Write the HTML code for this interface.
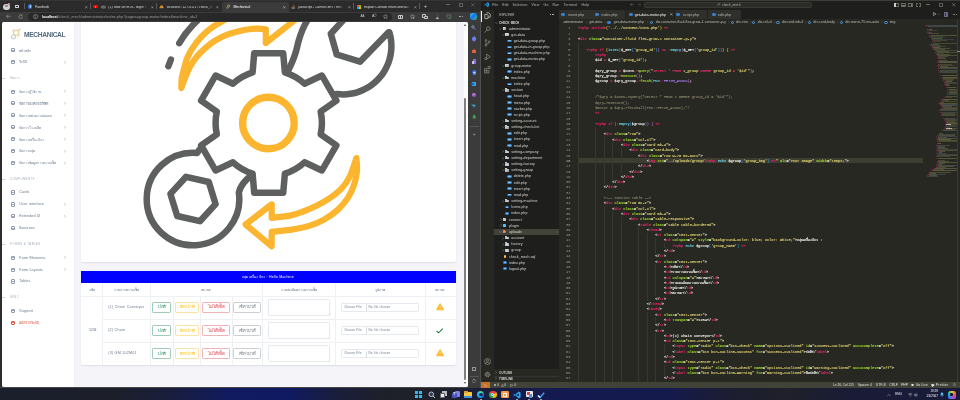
<!DOCTYPE html>
<html lang="th"><head><meta charset="utf-8"><title>Mechanical</title>
<style>
*{box-sizing:border-box}
html,body{margin:0;padding:0}
body{width:960px;height:400px;overflow:hidden;position:relative;background:#1d2028;font-family:"Liberation Sans",sans-serif;-webkit-font-smoothing:antialiased}
.a{position:absolute}
.t{position:absolute;white-space:nowrap;line-height:1}
svg{position:absolute;overflow:visible}
/* browser */
#edge{left:0;top:0;width:480.5px;height:387.6px;background:#3b3b3b;overflow:hidden}
#tabs{left:0;top:0;width:480.5px;height:11.5px;background:#2b2b2b}
.tt{font-size:3.5px;color:#d6d6d6;top:4.6px}
.tx{font-size:4px;color:#c8c8c8;top:4.2px}
.sep{width:.4px;height:6px;top:3.2px;background:#5a5a5a}
#pill{left:28px;top:12.6px;width:364px;height:8.5px;border-radius:4.3px;background:#282828}
/* page */
#page{left:1.5px;top:22px;width:466.5px;height:364.6px;background:#f5f5f9;border-radius:2.2px 2.2px 2.5px 2.5px;overflow:hidden}
#side{left:0;top:0;width:72.5px;height:364.6px;background:#fff;box-shadow:0 0 1.5px rgba(67,89,113,.12)}
.mi{font-size:3.65px;color:#697a8d;left:17.8px}
.mh{font-size:2.85px;color:#a1acb8;left:8.7px;letter-spacing:.05px}
.card{background:#fff;border-radius:2px;box-shadow:0 .5px 1.5px rgba(67,89,113,.14)}
.th{font-size:3.3px;color:#566a7f;text-align:center}
.td{font-size:3.65px;color:#697a8d}
.btn{position:absolute;height:11.3px;border:.4px solid;border-radius:1.2px;font-size:3.5px;line-height:10px;text-align:center;background:#fff}
.ta{position:absolute;width:62px;height:17.2px;border:.4px solid #e6e9ed;border-radius:1.3px;background:#fff}
.fi{position:absolute;width:78.5px;height:8.8px;border:.4px solid #e6e9ed;border-radius:1.3px;background:#fff;font-size:2.9px;color:#697a8d;line-height:8px}
/* vscode */
#vsc{left:481px;top:0;width:479px;height:387.7px;background:#272822;overflow:hidden;font-family:"Liberation Sans",sans-serif}
.code{font-family:"Liberation Mono","Noto Sans CJK SC",monospace;font-size:3.58px;line-height:5.3px;white-space:pre;color:#f8f8f2;-webkit-text-stroke:.1px;position:absolute;left:97px;height:5.3px}
.ln{font-family:"Liberation Mono",monospace;font-size:3.58px;line-height:5.3px;color:#90908a;position:absolute;left:77.4px;width:12px;text-align:right;height:5.3px}
.p{color:#f92672}.g{color:#a6e22e}.y{color:#e6db74}.b{color:#66d9ef}.c{color:#88846f}.v{color:#ae81ff}.o{color:#fd971f}.k1{color:#e6c820}.k2{color:#c86cc6}.k3{color:#2f95e8}.q{color:#c23264}
.tr{font-size:3.3px;color:#dcdcd6;height:6.16px;line-height:6.16px}
.sb{font-size:3.1px;color:#e8e8e2;top:383.6px}
</style></head>
<body>
<div id="root" class="a" style="left:0;top:0;width:960px;height:400px;will-change:transform">
<div id="edge" class="a"><div id="tabs" class="a"><div class="a" style="left:0;top:0;width:480.5px;height:1px;background:#353535"></div><div class="a" style="left:3.4px;top:3.5px;width:6.2px;height:6.2px;border-radius:50%;background:#d9d2d2"></div><div class="a" style="left:5.2px;top:4.6px;width:2.6px;height:2.6px;border-radius:50%;background:#8d8686"></div><div class="a" style="left:8px;top:3.3px;width:1.8px;height:1.8px;border-radius:50%;background:#e8a0a0"></div><div class="a" style="left:14.8px;top:4.7px;width:4.4px;height:3.8px;border:.5px solid #d8d8d8;border-top-width:1px;border-radius:.7px"></div><div class="a sep" style="left:24.3px"></div><div class="a" style="left:27.6px;top:4.3px;width:4.8px;height:4.8px;border-radius:50%;background:#1b74e4"></div><div class="t" style="left:29.40px;top:5.02px;font-size:4.4px;color:#fff;font-weight:bold;">f</div><div class="t" style="left:35.00px;top:6.02px;font-size:3.5px;color:#d6d6d6;letter-spacing:-0.172px;">Facebook</div><svg style="left:84.7px;top:5.6px" width="2.6" height="2.6" viewBox="0 0 26 26"><path d="M3 3l20 20M23 3L3 23" stroke="#cfcfcf" stroke-width="4.2"/></svg><div class="a sep" style="left:90.4px"></div><div class="a" style="left:93.2px;top:5px;width:4.8px;height:3.4px;border-radius:1px;background:#f00"></div><div class="a" style="left:95px;top:5.9px;width:0;height:0;border-left:1.5px solid #fff;border-top:.85px solid transparent;border-bottom:.85px solid transparent"></div><svg style="left:100.8px;top:4.6px" width="4.6" height="4.2" viewBox="0 0 46 42"><path d="M4 15h8l10-9v30l-10-9H4z" fill="none" stroke="#ddd" stroke-width="4"/><path d="M30 12q8 9 0 18M37 6q13 15 0 30" fill="none" stroke="#ddd" stroke-width="4"/></svg><div class="t" style="left:108.30px;top:6.02px;font-size:3.5px;color:#d6d6d6;letter-spacing:-0.001px;-webkit-mask-image:linear-gradient(90deg,#000 85%,transparent);">(1) ค้นหาเท่าที่ใจ - Night Ti</div><svg style="left:150.8px;top:5.6px" width="2.6" height="2.6" viewBox="0 0 26 26"><path d="M3 3l20 20M23 3L3 23" stroke="#cfcfcf" stroke-width="4.2"/></svg><div class="a sep" style="left:156.2px"></div><svg style="left:158.8px;top:4.3px" width="5" height="4.6" viewBox="0 0 50 46"><path d="M4 40L22 8l8 14 8-8 8 26z" fill="#f29111"/><path d="M4 40h42" stroke="#6c78af" stroke-width="6"/></svg><div class="t" style="left:166.70px;top:6.02px;font-size:3.5px;color:#d6d6d6;letter-spacing:-0.079px;-webkit-mask-image:linear-gradient(90deg,#000 88%,transparent);">localhost / 127.0.0.1 / check_m</div><svg style="left:216.3px;top:5.6px" width="2.6" height="2.6" viewBox="0 0 26 26"><path d="M3 3l20 20M23 3L3 23" stroke="#cfcfcf" stroke-width="4.2"/></svg><div class="a" style="left:221.6px;top:2.2px;width:67px;height:9.4px;border-radius:2px 2px 0 0;background:#3b3b3b"></div><svg style="left:225.6px;top:4.2px" width="4.6" height="5" viewBox="0 0 46 50"><circle cx="26" cy="20" r="11" fill="none" stroke="#e0b050" stroke-width="7"/><circle cx="14" cy="36" r="8" fill="none" stroke="#9a9a9a" stroke-width="6"/></svg><div class="t" style="left:233.50px;top:6.02px;font-size:3.5px;color:#d6d6d6;letter-spacing:-0.112px;color:#fff">Mechanical</div><svg style="left:282.8px;top:5.6px" width="2.6" height="2.6" viewBox="0 0 26 26"><path d="M3 3l20 20M23 3L3 23" stroke="#f0f0f0" stroke-width="4.2"/></svg><svg style="left:290.6px;top:4.2px" width="4.6" height="5" viewBox="0 0 46 50"><path d="M8 30v14h28V30" fill="none" stroke="#bcbbbb" stroke-width="5"/><path d="M14 36h16M15 27l16 4M19 17l14 8M27 7l10 13" stroke="#f48024" stroke-width="5"/></svg><div class="t" style="left:298.30px;top:6.02px;font-size:3.5px;color:#d6d6d6;letter-spacing:-0.097px;-webkit-mask-image:linear-gradient(90deg,#000 90%,transparent);">javascript - Cannot GET / error</div><svg style="left:348.40000000000003px;top:5.6px" width="2.6" height="2.6" viewBox="0 0 26 26"><path d="M3 3l20 20M23 3L3 23" stroke="#cfcfcf" stroke-width="4.2"/></svg><div class="a sep" style="left:353.3px"></div><div class="a" style="left:356.5px;top:4.5px;width:2.1px;height:2.1px;background:#f25022"></div><div class="a" style="left:358.9px;top:4.5px;width:2.1px;height:2.1px;background:#7fba00"></div><div class="a" style="left:356.5px;top:6.9px;width:2.1px;height:2.1px;background:#00a4ef"></div><div class="a" style="left:358.9px;top:6.9px;width:2.1px;height:2.1px;background:#ffb900"></div><div class="t" style="left:363.90px;top:6.02px;font-size:3.5px;color:#d6d6d6;letter-spacing:-0.135px;-webkit-mask-image:linear-gradient(90deg,#000 90%,transparent);">Explain Console errors and warn</div><svg style="left:413.8px;top:5.6px" width="2.6" height="2.6" viewBox="0 0 26 26"><path d="M3 3l20 20M23 3L3 23" stroke="#cfcfcf" stroke-width="4.2"/></svg><div class="a sep" style="left:419.4px"></div><div class="t" style="left:424.00px;top:4.02px;font-size:5px;color:#ddd;">+</div><div class="a" style="left:446px;top:4px;width:4px;height:1px;background:#6a6a6a"></div><div class="a" style="left:459px;top:3px;width:4px;height:4px;border:1px solid #5e5e5e"></div><svg style="left:471.2px;top:2.8px" width="3.6" height="3.6" viewBox="0 0 36 36"><path d="M2 2l32 32M34 2L2 34" stroke="#aaa" stroke-width="3.4"/></svg></div><svg style="left:5.6px;top:14.3px" width="5" height="4.6" viewBox="0 0 50 46"><path d="M46 23H6M22 5L5 23l17 18" fill="none" stroke="#d0d0d0" stroke-width="4"/></svg><svg style="left:18px;top:14px" width="5.2" height="5.2" viewBox="0 0 52 52"><path d="M44 26a18 18 0 1 1-6-13.5" fill="none" stroke="#d0d0d0" stroke-width="4"/><path d="M40 3v12H28" fill="none" stroke="#d0d0d0" stroke-width="4"/></svg><div id="pill" class="a"></div><svg style="left:32.5px;top:14.2px" width="5.2" height="5.2" viewBox="0 0 52 52"><circle cx="26" cy="26" r="21" fill="none" stroke="#cfcfcf" stroke-width="4.2"/><path d="M26 23v14M26 15v4" stroke="#cfcfcf" stroke-width="4.6"/></svg><div class="t" style="left:42.00px;top:16.02px;font-size:3.5px;color:#ffffff;font-weight:bold;letter-spacing:0.025px;">localhost</div><div class="t" style="left:58.00px;top:16.02px;font-size:3.5px;color:#a2a2a2;letter-spacing:0.213px;">/check_mech/administrator/index.php?pages=group-motor/index&amp;machine_id=1</div><div class="t" style="left:360.60px;top:15.02px;font-size:3.4px;color:#cfcfcf;">A<span style="font-size:2.6px">A</span></div><div class="t" style="left:372.00px;top:15.02px;font-size:3.8px;color:#cfcfcf;">A<span style="font-size:2.6px;position:relative;top:-1px">›)</span></div><svg style="left:383.4px;top:14.1px" width="5" height="5" viewBox="0 0 50 50"><path d="M25 4l6.5 14 15 2-11 10.5 2.8 15L25 38l-13.3 7.5 2.8-15L3.500 20l15-2z" fill="none" stroke="#cfcfcf" stroke-width="3.8" stroke-linejoin="round"/></svg><div class="a" style="left:397.8px;top:14.6px;width:5.4px;height:4.2px;border:1px solid #c8c8c8;border-radius:.9px"></div><div class="a" style="left:400.25px;top:14.6px;width:.8px;height:4.2px;background:#c8c8c8"></div><svg style="left:409.5px;top:14.1px" width="5" height="5" viewBox="0 0 50 50"><path d="M25 4l6.5 14 15 2-11 10.5 2.8 15L25 38l-13.3 7.5 2.8-15L3.500 20l15-2z" fill="none" stroke="#cfcfcf" stroke-width="3.8" stroke-linejoin="round"/><path d="M36 32v14M29 39h14" stroke="#cfcfcf" stroke-width="3.8"/></svg><div class="a" style="left:422.4px;top:14.2px;width:3.6px;height:3.6px;border:1px solid #c8c8c8;border-radius:.9px"></div><div class="a" style="left:424px;top:15.6px;width:3.6px;height:3.6px;border:1px solid #c8c8c8;border-radius:.9px;background:#3b3b3b"></div><svg style="left:434.6px;top:14px" width="4.8" height="5.4" viewBox="0 0 48 54"><path d="M24 4v28M24 32c-10 4-14 12-14 18h28c0-6-4-14-14-18z" fill="#b5b5b5" stroke="#b5b5b5" stroke-width="2"/></svg><svg style="left:446.2px;top:14.3px" width="5.6" height="5" viewBox="0 0 56 50"><path d="M28 46C6 30 4 20 8 12c5-8 15-7 20 1 5-8 15-9 20-1 4 8 2 18-20 34z" fill="none" stroke="#bdbdbd" stroke-width="3.6"/><circle cx="42" cy="40" r="7" fill="#3fa34d"/></svg><div class="a" style="left:458.6px;top:16.4px;width:.8px;height:.8px;border-radius:50%;background:#e0e0e0"></div><div class="a" style="left:460.3px;top:16.4px;width:.8px;height:.8px;border-radius:50%;background:#e0e0e0"></div><div class="a" style="left:462.0px;top:16.4px;width:.8px;height:.8px;border-radius:50%;background:#e0e0e0"></div><div class="a" style="left:469.6px;top:13px;width:7.2px;height:7.2px;border-radius:2.4px;background:linear-gradient(135deg,#2ec4f0 10%,#1b6ff0 45%,#27c28a 95%)"></div><svg style="left:471.2px;top:25.2px" width="4.8" height="4.8" viewBox="0 0 48 48"><circle cx="19" cy="19" r="12" fill="#2d3e55" stroke="#8fd0f5" stroke-width="6"/><path d="M29 29l14 14" stroke="#c060d0" stroke-width="8" stroke-linecap="round"/></svg><div class="a" style="left:471.7px;top:37.2px;width:3.8px;height:3.8px;border-radius:.9px;background:linear-gradient(135deg,#5a8df5,#8a6cf0);transform:rotate(-35deg) skewX(-10deg)"></div><div class="a" style="left:471.5px;top:50px;width:4.6px;height:3.2px;border-radius:.7px;background:#e2623a"></div><div class="a" style="left:472.6px;top:48.8px;width:2.4px;height:1.6px;border-radius:.8px .8px 0 0;border:.5px solid #c4472a;border-bottom:none"></div><div class="a" style="left:473.2px;top:59.4px;width:2.6px;height:4.4px;border-radius:.8px;background:#8f6fe0"></div><div class="a" style="left:471.6px;top:60.8px;width:2.4px;height:3px;border-radius:.8px;background:#d8c8f0"></div><div class="a" style="left:471.5px;top:70.3px;width:4.6px;height:4.6px;border-radius:50%;background:conic-gradient(#3a6cf0,#7ab8ff,#2a4fd8,#3a6cf0)"></div><div class="a" style="left:472.9px;top:71.7px;width:1.8px;height:1.8px;border-radius:50%;background:#dde8ff"></div><div class="a" style="left:472.4px;top:81.6px;width:3.8px;height:4px;border-radius:.6px;background:#35a2f0"></div><div class="a" style="left:471.3px;top:82.6px;width:2.8px;height:2.8px;border-radius:.5px;background:#1466c0"></div><div class="a" style="left:471.6px;top:92.6px;width:4.4px;height:4.2px;border-radius:45% 55% 50% 50%;background:linear-gradient(160deg,#d58af0,#8a35c8)"></div><svg style="left:471.2px;top:103.6px" width="5.2" height="4.2" viewBox="0 0 52 42"><path d="M2 6l48 2-22 30-6-16z" fill="#35b5c8"/><path d="M22 22l28-14-22 30z" fill="#2a78c8"/></svg><svg style="left:471.6px;top:113.8px" width="4.4" height="5.6" viewBox="0 0 44 56"><path d="M22 2l18 26H30l12 16H2l12-16H4z" fill="#3aa856"/><rect x="19" y="44" width="6" height="10" fill="#6b4a2a"/></svg><div class="a" style="left:469.5px;top:125.6px;width:9px;height:.4px;background:#555"></div><div class="t" style="left:472.70px;top:133.02px;font-size:4.6px;color:#a8a8a8;">+</div><div class="a" style="left:471.6px;top:367.4px;width:4.8px;height:3.8px;border:.45px solid #9a9a9a;border-radius:.6px"></div><div class="a" style="left:471.9px;top:379.2px;width:4.2px;height:4.2px;border-radius:50%;border:.8px dotted #a0a0a0"></div><div class="a" style="left:469.5px;top:375.6px;width:9px;height:.35px;background:#555"></div><div class="a" style="left:0;top:22px;width:1.6px;height:366px;background:#2c2c2c"></div><div class="a" style="left:0;top:386.7px;width:469px;height:.9px;background:#444"></div><div class="a" style="left:480px;top:10px;width:.6px;height:378px;background:#505050"></div><div id="page" class="a"><div class="a card" style="left:79.6px;top:-10px;width:375px;height:250px"></div><div class="a card" style="left:79.6px;top:249.4px;width:375px;height:93.8px;overflow:hidden;border-radius:0 0 2px 2px"><div class="a" style="left:0;top:0;width:375px;height:11.9px;background:#0000fe"></div><div class="t" style="left:160.90px;top:4.62px;font-size:3.5px;color:#fff;letter-spacing:0.215px;">กลุ่มเครื่องจักร : Hello Machine</div><div class="a" style="left:21.400000000000006px;top:11.9px;width:.4px;height:82px;background:#eff0f3"></div><div class="a" style="left:69.30000000000001px;top:11.9px;width:.4px;height:82px;background:#eff0f3"></div><div class="a" style="left:181.29999999999998px;top:11.9px;width:.4px;height:82px;background:#eff0f3"></div><div class="a" style="left:254.1px;top:11.9px;width:.4px;height:82px;background:#eff0f3"></div><div class="a" style="left:343.9px;top:11.9px;width:.4px;height:82px;background:#eff0f3"></div><div class="a" style="left:92.4px;top:24.8px;width:.4px;height:70px;background:#eff0f3"></div><div class="a" style="left:118.9px;top:24.8px;width:.4px;height:70px;background:#eff0f3"></div><div class="a" style="left:150.5px;top:24.8px;width:.4px;height:70px;background:#eff0f3"></div><div class="a" style="left:0;top:24.7px;width:375px;height:.4px;background:#eff0f3"></div><div class="a" style="left:21.400000000000006px;top:47.400000000000034px;width:354px;height:.4px;background:#eff0f3"></div><div class="a" style="left:21.400000000000006px;top:70.40000000000003px;width:354px;height:.4px;background:#eff0f3"></div><div class="t" style="left:0.00px;top:17.62px;font-size:3.3px;color:#566a7f;width:21.400000000000006px;text-align:center;">รหัส</div><div class="t" style="left:21.40px;top:17.62px;font-size:3.3px;color:#566a7f;width:47.900000000000006px;text-align:center;">รายการตรวจเช็ค</div><div class="t" style="left:69.30px;top:17.62px;font-size:3.3px;color:#566a7f;width:111.99999999999997px;text-align:center;">สถานะ</div><div class="t" style="left:181.30px;top:17.62px;font-size:3.3px;color:#566a7f;width:72.80000000000001px;text-align:center;">รายละเอียดการตรวจเช็ค</div><div class="t" style="left:254.10px;top:17.62px;font-size:3.3px;color:#566a7f;width:89.80000000000001px;text-align:center;">รูปภาพ</div><div class="t" style="left:343.90px;top:17.62px;font-size:3.3px;color:#566a7f;width:31px;text-align:center;">สถานะ</div><div class="t" style="left:7.80px;top:57.62px;font-size:3.65px;color:#697a8d;letter-spacing:-0.127px;">1234</div><div class="t" style="left:27.10px;top:34.62px;font-size:3.65px;color:#697a8d;letter-spacing:0.246px;">(1) Chain Conveyor</div><div class="btn" style="left:71.30000000000001px;top:30.600000000000023px;width:19.0px;border-color:#9fccb6"></div><div class="t" style="left:71.30px;top:33.62px;font-size:4.06px;color:#198754;width:19.0px;text-align:center;">ปกติ</div><div class="btn" style="left:94.1px;top:30.600000000000023px;width:24.100000000000023px;border-color:#f9e3a6"></div><div class="t" style="left:94.10px;top:33.62px;font-size:4.33px;color:#ffc107;width:24.100000000000023px;text-align:center;">ผิดปกติ</div><div class="btn" style="left:121.20000000000002px;top:30.600000000000023px;width:27.899999999999977px;border-color:#efb4b9"></div><div class="t" style="left:121.20px;top:33.62px;font-size:4.38px;color:#dc3545;width:27.899999999999977px;text-align:center;">ไม่ได้เช็ค</div><div class="btn" style="left:152.3px;top:30.600000000000023px;width:27.599999999999994px;border-color:#cdd0d3"></div><div class="t" style="left:152.30px;top:33.62px;font-size:4.0px;color:#6c757d;width:27.599999999999994px;text-align:center;">เช็คไม่ได้</div><div class="ta" style="left:186.9px;top:27.30000000000001px"></div><svg style="left:246.50000000000003px;top:42.10000000000002px" width="2" height="2" viewBox="0 0 20 20"><path d="M18 4L4 18M18 12l-6 6" stroke="#8a8f98" stroke-width="2.2"/></svg><div class="fi" style="left:259.9px;top:31.5px"><span style="position:absolute;left:24.3px;top:.5px;width:.4px;height:7px;background:#d9dee3"></span></div><div class="t" style="left:263.10px;top:34.62px;font-size:2.95px;color:#697a8d;letter-spacing:0.174px;">Choose File</div><div class="t" style="left:287.40px;top:34.62px;font-size:2.95px;color:#697a8d;letter-spacing:0.241px;">No file chosen</div><svg style="left:354.6px;top:31.900000000000034px" width="8.2" height="7.4" viewBox="0 0 82 74"><path d="M41 6L77 68H5z" fill="#fdb528" stroke="#fdb528" stroke-width="8" stroke-linejoin="round"/><path d="M41 27v20M41 55v6" stroke="#fff" stroke-width="7"/></svg><div class="t" style="left:27.10px;top:57.62px;font-size:3.65px;color:#697a8d;letter-spacing:0.224px;">(2) Chain</div><div class="btn" style="left:71.30000000000001px;top:53.700000000000045px;width:19.0px;border-color:#9fccb6"></div><div class="t" style="left:71.30px;top:57.62px;font-size:4.06px;color:#198754;width:19.0px;text-align:center;">ปกติ</div><div class="btn" style="left:94.1px;top:53.700000000000045px;width:24.100000000000023px;border-color:#f9e3a6"></div><div class="t" style="left:94.10px;top:57.62px;font-size:4.33px;color:#ffc107;width:24.100000000000023px;text-align:center;">ผิดปกติ</div><div class="btn" style="left:121.20000000000002px;top:53.700000000000045px;width:27.899999999999977px;border-color:#efb4b9"></div><div class="t" style="left:121.20px;top:57.62px;font-size:4.38px;color:#dc3545;width:27.899999999999977px;text-align:center;">ไม่ได้เช็ค</div><div class="btn" style="left:152.3px;top:53.700000000000045px;width:27.599999999999994px;border-color:#cdd0d3"></div><div class="t" style="left:152.30px;top:57.62px;font-size:4.0px;color:#6c757d;width:27.599999999999994px;text-align:center;">เช็คไม่ได้</div><div class="ta" style="left:186.9px;top:50.400000000000034px"></div><svg style="left:246.50000000000003px;top:65.20000000000005px" width="2" height="2" viewBox="0 0 20 20"><path d="M18 4L4 18M18 12l-6 6" stroke="#8a8f98" stroke-width="2.2"/></svg><div class="fi" style="left:259.9px;top:54.60000000000002px"><span style="position:absolute;left:24.3px;top:.5px;width:.4px;height:7px;background:#d9dee3"></span></div><div class="t" style="left:263.10px;top:57.62px;font-size:2.95px;color:#697a8d;letter-spacing:0.174px;">Choose File</div><div class="t" style="left:287.40px;top:57.62px;font-size:2.95px;color:#697a8d;letter-spacing:0.241px;">No file chosen</div><svg style="left:355.1px;top:56.200000000000045px" width="7.4" height="5.6" viewBox="0 0 74 56"><path d="M6 30l20 18L68 7" fill="none" stroke="#1a7f45" stroke-width="11"/></svg><div class="t" style="left:27.10px;top:80.62px;font-size:3.65px;color:#697a8d;letter-spacing:0.238px;">(3) GM 102M01</div><div class="btn" style="left:71.30000000000001px;top:76.80000000000001px;width:19.0px;border-color:#9fccb6"></div><div class="t" style="left:71.30px;top:80.62px;font-size:4.06px;color:#198754;width:19.0px;text-align:center;">ปกติ</div><div class="btn" style="left:94.1px;top:76.80000000000001px;width:24.100000000000023px;border-color:#f9e3a6"></div><div class="t" style="left:94.10px;top:80.62px;font-size:4.33px;color:#ffc107;width:24.100000000000023px;text-align:center;">ผิดปกติ</div><div class="btn" style="left:121.20000000000002px;top:76.80000000000001px;width:27.899999999999977px;border-color:#efb4b9"></div><div class="t" style="left:121.20px;top:80.62px;font-size:4.38px;color:#dc3545;width:27.899999999999977px;text-align:center;">ไม่ได้เช็ค</div><div class="btn" style="left:152.3px;top:76.80000000000001px;width:27.599999999999994px;border-color:#cdd0d3"></div><div class="t" style="left:152.30px;top:80.62px;font-size:4.0px;color:#6c757d;width:27.599999999999994px;text-align:center;">เช็คไม่ได้</div><div class="ta" style="left:186.9px;top:73.5px"></div><svg style="left:246.50000000000003px;top:88.30000000000001px" width="2" height="2" viewBox="0 0 20 20"><path d="M18 4L4 18M18 12l-6 6" stroke="#8a8f98" stroke-width="2.2"/></svg><div class="fi" style="left:259.9px;top:77.69999999999999px"><span style="position:absolute;left:24.3px;top:.5px;width:.4px;height:7px;background:#d9dee3"></span></div><div class="t" style="left:263.10px;top:80.62px;font-size:2.95px;color:#697a8d;letter-spacing:0.174px;">Choose File</div><div class="t" style="left:287.40px;top:80.62px;font-size:2.95px;color:#697a8d;letter-spacing:0.241px;">No file chosen</div><svg style="left:354.6px;top:78.10000000000002px" width="8.2" height="7.4" viewBox="0 0 82 74"><path d="M41 6L77 68H5z" fill="#fdb528" stroke="#fdb528" stroke-width="8" stroke-linejoin="round"/><path d="M41 27v20M41 55v6" stroke="#fff" stroke-width="7"/></svg></div><svg style="left:-1.5px;top:-22px" width="960" height="400" viewBox="0 0 960 400" fill="none" stroke-linecap="round" stroke-linejoin="round"><g stroke="#5d605f" stroke-width="6.5"><path d="M252.6 72.4L254.2 53.2L283.2 53.2L284.9 72.4A53.1 53.1 0 0 1 304.5 83.7L321.9 75.5L336.4 100.7L320.7 111.7A53.1 53.1 0 0 1 320.7 134.3L336.4 145.3L321.9 170.5L304.5 162.3A53.1 53.1 0 0 1 284.9 173.6L283.2 192.8L254.2 192.8L252.6 173.6A53.1 53.1 0 0 1 233.0 162.3L215.6 170.5L201.1 145.3L216.8 134.3A53.1 53.1 0 0 1 216.8 111.7L201.1 100.7L215.6 75.5L233.0 83.7A53.1 53.1 0 0 1 252.6 72.4Z"/><path d="M287.3 72.2C288.1 70.6 290.6 65.9 292.0 62.5C293.4 59.1 294.7 55.6 295.8 52.0C296.9 48.4 297.5 44.7 298.6 41.0C299.7 37.3 300.9 33.5 302.4 30.0C303.9 26.5 305.7 23.0 307.5 20.0C309.3 17.0 312.1 13.3 313.0 12.0"/><path d="M348 15L330.8 33.7L336.7 54.5L360 61.7L388.6 32.2L389.4 32.3C389.7 33.4 390.6 36.7 390.9 39.0C391.2 41.2 391.4 43.5 391.4 45.8C391.4 48.1 391.3 50.4 390.9 52.7C390.6 54.9 390.1 57.2 389.5 59.4C388.9 61.6 388.1 63.8 387.1 65.9C386.2 67.9 385.1 70.0 383.9 71.9C382.7 73.8 381.3 75.7 379.8 77.4C378.3 79.2 376.7 80.8 375.0 82.3C373.3 83.8 371.4 85.2 369.5 86.5C367.6 87.7 365.6 88.9 363.5 89.8C361.4 90.8 359.3 91.6 357.1 92.3C354.9 93.0 352.7 93.5 350.4 93.8C348.1 94.2 345.8 94.4 343.5 94.4C341.3 94.4 337.8 94.1 336.7 94.0"/><path d="M252 174.8Q240.6 183.4 238.85 192.6A46.3 46.3 0 1 1 197 152.9L201.7 146.8"/><path d="M215.6 204.1L199.9 221.2L177.2 216.0L170.4 193.9L186.1 176.8L208.8 182.0Z"/><path d="M179.3 43.2Q186.5 30.5 198.5 19.5"/><path d="M170.9 59.6L168.4 66.1"/></g><circle cx="268.4" cy="123" r="25.8" stroke="#fbb52e" stroke-width="7.4"/><path d="M271.7 217.7L271.7 204.3L245.6 224.5L271.7 246.3L271.7 231.8L271.7 231.8C273.6 231.6 279.3 231.0 283.0 230.6C286.7 230.2 289.5 230.0 294.0 229.2C298.5 228.4 305.0 227.2 310.0 225.6C315.0 224.0 319.3 222.3 324.0 219.6C328.7 216.9 334.0 213.3 338.0 209.6C342.0 205.9 345.3 201.7 348.0 197.6C350.7 193.5 352.5 189.4 354.0 185.0C355.5 180.6 356.6 175.5 357.0 171.0C357.4 166.5 356.5 160.2 356.4 158.0L356.4 158.0C355.3 161.0 352.4 171.0 350.0 176.0C347.6 181.0 345.3 184.3 342.0 188.0C338.7 191.7 334.3 195.0 330.0 198.0C325.7 201.0 320.7 203.7 316.0 206.0C311.3 208.3 306.3 210.4 302.0 212.0C297.7 213.6 295.1 214.6 290.0 215.6C284.9 216.6 274.8 217.5 271.7 217.9" stroke="#fbb52e" stroke-width="6.2"/><path d="M265.8 29.3L258.0 28.6C256.7 28.7 253.0 28.8 250.0 29.2C247.0 29.6 243.7 30.0 240.0 30.9C236.3 31.8 231.9 32.8 227.8 34.4C223.7 36.0 219.3 38.1 215.5 40.4C211.7 42.7 208.2 45.5 205.0 48.3C201.8 51.1 198.9 54.0 196.3 57.2C193.7 60.4 191.5 64.0 189.6 67.5C187.7 71.0 186.2 75.1 184.8 78.5C183.4 81.9 181.9 86.4 181.3 88.0L181.3 88.0C181.4 86.5 181.3 81.7 181.6 79.0C181.9 76.3 182.2 75.6 183.2 72.0C184.2 68.4 185.3 62.2 187.4 57.4C189.5 52.6 192.7 47.6 196.0 43.2C199.3 38.8 203.4 34.4 207.5 30.9C211.6 27.4 216.7 24.5 220.8 22.0C224.9 19.5 230.1 17.0 232.0 16.0M265.8 29.3L265.8 43L291.6 22.6L296 19" stroke="#fbb52e" stroke-width="6.2"/></svg><div id="side" class="a"><svg style="left:8px;top:6.4px;opacity:.8" width="11.5" height="12.5" viewBox="0 0 115 125"><circle cx="62" cy="48" r="26" fill="none" stroke="#e8c878" stroke-width="13"/><circle cx="34" cy="88" r="20" fill="none" stroke="#bfc3c8" stroke-width="11"/><path d="M78 14l26-6-8 26M30 40q-14-16 10-30" fill="none" stroke="#c9ccd0" stroke-width="9"/><path d="M70 96q28-4 26-34" fill="none" stroke="#ecd090" stroke-width="9"/></svg><div class="t" style="left:22.50px;top:10.02px;font-size:6.65px;color:#566a7f;font-weight:bold;letter-spacing:-0.334px;">MECHANICAL</div><div class="a" style="left:9.5px;top:26.199999999999996px;width:4.2px;height:4.2px;border:.5px solid #8e9aab;border-radius:1px"></div><div class="a" style="left:9.5px;top:27.499999999999996px;width:4.2px;height:.4px;background:#8e9aab;opacity:.8"></div><div class="t" style="left:17.80px;top:28.02px;font-size:3.53px;color:#697a8d;">หน้าหลัก</div><div class="a" style="left:9.5px;top:37.9px;width:4.2px;height:4.2px;border:.5px solid #8e9aab;border-radius:1px"></div><div class="a" style="left:9.5px;top:39.2px;width:4.2px;height:.4px;background:#8e9aab;opacity:.8"></div><div class="t" style="left:17.80px;top:39.02px;font-size:3.64px;color:#697a8d;">ระบบ</div><svg style="left:62.2px;top:38.6px" width="1.9" height="2.8" viewBox="0 0 19 28"><path d="M4 3l11 11L4 25" fill="none" stroke="#697a8d" stroke-width="4.6"/></svg><div class="a" style="left:9.5px;top:67.7px;width:4.2px;height:4.2px;border:.5px solid #8e9aab;border-radius:1px"></div><div class="a" style="left:9.5px;top:69.0px;width:4.2px;height:.4px;background:#8e9aab;opacity:.8"></div><div class="t" style="left:17.80px;top:69.02px;font-size:3.43px;color:#697a8d;">จัดการผู้ใช้งาน</div><svg style="left:62.2px;top:68.39999999999999px" width="1.9" height="2.8" viewBox="0 0 19 28"><path d="M4 3l11 11L4 25" fill="none" stroke="#697a8d" stroke-width="4.6"/></svg><div class="a" style="left:9.5px;top:79.30000000000001px;width:4.2px;height:4.2px;border:.5px solid #8e9aab;border-radius:1px"></div><div class="a" style="left:9.5px;top:80.60000000000001px;width:4.2px;height:.4px;background:#8e9aab;opacity:.8"></div><div class="t" style="left:17.80px;top:81.02px;font-size:3.64px;color:#697a8d;">จัดการองค์กร/บริษัท</div><svg style="left:62.2px;top:80.0px" width="1.9" height="2.8" viewBox="0 0 19 28"><path d="M4 3l11 11L4 25" fill="none" stroke="#697a8d" stroke-width="4.6"/></svg><div class="a" style="left:9.5px;top:91.30000000000001px;width:4.2px;height:4.2px;border:.5px solid #8e9aab;border-radius:1px"></div><div class="a" style="left:9.5px;top:92.60000000000001px;width:4.2px;height:.4px;background:#8e9aab;opacity:.8"></div><div class="t" style="left:17.80px;top:93.02px;font-size:3.52px;color:#697a8d;">จัดการหน่วยงาน/แผนก</div><svg style="left:62.2px;top:92.0px" width="1.9" height="2.8" viewBox="0 0 19 28"><path d="M4 3l11 11L4 25" fill="none" stroke="#697a8d" stroke-width="4.6"/></svg><div class="a" style="left:9.5px;top:103.2px;width:4.2px;height:4.2px;border:.5px solid #8e9aab;border-radius:1px"></div><div class="a" style="left:9.5px;top:104.5px;width:4.2px;height:.4px;background:#8e9aab;opacity:.8"></div><div class="t" style="left:17.80px;top:105.02px;font-size:3.52px;color:#697a8d;">จัดการโรงผลิต</div><svg style="left:62.2px;top:103.89999999999999px" width="1.9" height="2.8" viewBox="0 0 19 28"><path d="M4 3l11 11L4 25" fill="none" stroke="#697a8d" stroke-width="4.6"/></svg><div class="a" style="left:9.5px;top:115.1px;width:4.2px;height:4.2px;border:.5px solid #8e9aab;border-radius:1px"></div><div class="a" style="left:9.5px;top:116.39999999999999px;width:4.2px;height:.4px;background:#8e9aab;opacity:.8"></div><div class="t" style="left:17.80px;top:117.02px;font-size:3.47px;color:#697a8d;">จัดการเครื่องจักร</div><svg style="left:62.2px;top:115.79999999999998px" width="1.9" height="2.8" viewBox="0 0 19 28"><path d="M4 3l11 11L4 25" fill="none" stroke="#697a8d" stroke-width="4.6"/></svg><div class="a" style="left:9.5px;top:127.0px;width:4.2px;height:4.2px;border:.5px solid #8e9aab;border-radius:1px"></div><div class="a" style="left:9.5px;top:128.29999999999998px;width:4.2px;height:.4px;background:#8e9aab;opacity:.8"></div><div class="t" style="left:17.80px;top:128.02px;font-size:3.54px;color:#697a8d;">จัดการกลุ่ม</div><svg style="left:62.2px;top:127.69999999999999px" width="1.9" height="2.8" viewBox="0 0 19 28"><path d="M4 3l11 11L4 25" fill="none" stroke="#697a8d" stroke-width="4.6"/></svg><div class="a" style="left:9.5px;top:138.9px;width:4.2px;height:4.2px;border:.5px solid #8e9aab;border-radius:1px"></div><div class="a" style="left:9.5px;top:140.2px;width:4.2px;height:.4px;background:#8e9aab;opacity:.8"></div><div class="t" style="left:17.80px;top:140.02px;font-size:3.44px;color:#697a8d;">จัดการข้อมูลการตรวจเช็ค</div><svg style="left:62.2px;top:139.6px" width="1.9" height="2.8" viewBox="0 0 19 28"><path d="M4 3l11 11L4 25" fill="none" stroke="#697a8d" stroke-width="4.6"/></svg><div class="a" style="left:9.5px;top:168.4px;width:4.2px;height:4.2px;border:.5px solid #8e9aab;border-radius:1px"></div><div class="a" style="left:9.5px;top:169.7px;width:4.2px;height:.4px;background:#8e9aab;opacity:.8"></div><div class="t" style="left:17.80px;top:169.02px;font-size:3.65px;color:#697a8d;letter-spacing:0.096px;">Cards</div><div class="a" style="left:9.5px;top:180.4px;width:4.2px;height:4.2px;border:.5px solid #8e9aab;border-radius:1px"></div><div class="a" style="left:9.5px;top:181.7px;width:4.2px;height:.4px;background:#8e9aab;opacity:.8"></div><div class="t" style="left:17.80px;top:181.02px;font-size:3.65px;color:#697a8d;letter-spacing:0.145px;">User interface</div><svg style="left:62.2px;top:181.1px" width="1.9" height="2.8" viewBox="0 0 19 28"><path d="M4 3l11 11L4 25" fill="none" stroke="#697a8d" stroke-width="4.6"/></svg><div class="a" style="left:9.5px;top:192.3px;width:4.2px;height:4.2px;border:.5px solid #8e9aab;border-radius:1px"></div><div class="a" style="left:9.5px;top:193.6px;width:4.2px;height:.4px;background:#8e9aab;opacity:.8"></div><div class="t" style="left:17.80px;top:193.02px;font-size:3.65px;color:#697a8d;letter-spacing:0.105px;">Extended UI</div><svg style="left:62.2px;top:193.0px" width="1.9" height="2.8" viewBox="0 0 19 28"><path d="M4 3l11 11L4 25" fill="none" stroke="#697a8d" stroke-width="4.6"/></svg><div class="a" style="left:9.5px;top:204.20000000000002px;width:4.2px;height:4.2px;border:.5px solid #8e9aab;border-radius:1px"></div><div class="a" style="left:9.5px;top:205.5px;width:4.2px;height:.4px;background:#8e9aab;opacity:.8"></div><div class="t" style="left:17.80px;top:205.02px;font-size:3.65px;color:#697a8d;letter-spacing:0.115px;">Boxicons</div><div class="a" style="left:9.5px;top:233.6px;width:4.2px;height:4.2px;border:.5px solid #8e9aab;border-radius:1px"></div><div class="a" style="left:9.5px;top:234.89999999999998px;width:4.2px;height:.4px;background:#8e9aab;opacity:.8"></div><div class="t" style="left:17.80px;top:235.02px;font-size:3.65px;color:#697a8d;letter-spacing:0.116px;">Form Elements</div><svg style="left:62.2px;top:234.29999999999998px" width="1.9" height="2.8" viewBox="0 0 19 28"><path d="M4 3l11 11L4 25" fill="none" stroke="#697a8d" stroke-width="4.6"/></svg><div class="a" style="left:9.5px;top:245.50000000000003px;width:4.2px;height:4.2px;border:.5px solid #8e9aab;border-radius:1px"></div><div class="a" style="left:9.5px;top:246.8px;width:4.2px;height:.4px;background:#8e9aab;opacity:.8"></div><div class="t" style="left:17.80px;top:247.02px;font-size:3.65px;color:#697a8d;letter-spacing:0.120px;">Form Layouts</div><svg style="left:62.2px;top:246.20000000000002px" width="1.9" height="2.8" viewBox="0 0 19 28"><path d="M4 3l11 11L4 25" fill="none" stroke="#697a8d" stroke-width="4.6"/></svg><div class="a" style="left:9.5px;top:257.4px;width:4.2px;height:4.2px;border:.5px solid #8e9aab;border-radius:1px"></div><div class="a" style="left:9.5px;top:258.7px;width:4.2px;height:.4px;background:#8e9aab;opacity:.8"></div><div class="t" style="left:17.80px;top:258.02px;font-size:3.65px;color:#697a8d;letter-spacing:0.078px;">Tables</div><div class="a" style="left:9.5px;top:286.9px;width:4.2px;height:4.2px;border:.5px solid #8e9aab;border-radius:1px"></div><div class="a" style="left:9.5px;top:288.2px;width:4.2px;height:.4px;background:#8e9aab;opacity:.8"></div><div class="t" style="left:17.80px;top:288.02px;font-size:3.65px;color:#697a8d;letter-spacing:0.176px;">Support</div><div class="a" style="left:9.5px;top:298.9px;width:4.2px;height:4.2px;border:.5px solid #e0533a;border-radius:1px"></div><div class="a" style="left:9.5px;top:300.2px;width:4.2px;height:.4px;background:#e0533a;opacity:.8"></div><div class="t" style="left:17.80px;top:300.02px;font-size:3.62px;color:#d9482f;">ออกจากระบบ</div><div class="a" style="left:0;top:55.599999999999994px;width:3.6px;height:.4px;background:#cfd4da"></div><div class="t" style="left:8.80px;top:55.02px;font-size:3.28px;color:#a1acb8;">จัดการ</div><div class="a" style="left:0;top:156.60000000000002px;width:3.6px;height:.4px;background:#cfd4da"></div><div class="t" style="left:8.70px;top:156.02px;font-size:2.85px;color:#a1acb8;letter-spacing:0.431px;">COMPONENTS</div><div class="a" style="left:0;top:221.8px;width:3.6px;height:.4px;background:#cfd4da"></div><div class="t" style="left:8.70px;top:221.02px;font-size:2.85px;color:#a1acb8;letter-spacing:0.436px;">FORMS &amp; TABLES</div><div class="a" style="left:0;top:275.3px;width:3.6px;height:.4px;background:#cfd4da"></div><div class="t" style="left:8.70px;top:274.02px;font-size:2.85px;color:#a1acb8;letter-spacing:0.473px;">MISC</div></div><div class="a" style="left:462.3px;top:0;width:4.2px;height:364.6px;background:#fcfcfc"></div><div class="a" style="left:462.8px;top:75.5px;width:1.9px;height:282.6px;border-radius:.9px;background:#808080"></div><div class="a" style="left:462.9px;top:2.3px;width:0;height:0;border-left:1.5px solid transparent;border-right:1.5px solid transparent;border-bottom:2.2px solid #3a3a3a"></div><div class="a" style="left:462.9px;top:360px;width:0;height:0;border-left:1.5px solid transparent;border-right:1.5px solid transparent;border-top:2.2px solid #3a3a3a"></div></div></div><div id="vsc" class="a"><div class="a" style="left:0;top:0;width:479px;height:9.6px;background:#1e1f1c"></div><div class="a" style="left:0;top:0;width:479px;height:.8px;background:#3c3c3a"></div><svg style="left:3.4px;top:2.2px" width="5.2" height="5.2" viewBox="0 0 52 52"><path d="M37 3L14 24 5 17l-3 2 8 7-8 7 3 2 9-7 23 21 12-6V9z M37 16v20L22 26z" fill="#2aa5f0" fill-rule="evenodd"/></svg><div class="t" style="left:11.30px;top:4.02px;font-size:3.5px;color:#b4b4ae;letter-spacing:.08px;">File</div><div class="t" style="left:21.30px;top:4.02px;font-size:3.5px;color:#b4b4ae;letter-spacing:.08px;">Edit</div><div class="t" style="left:31.40px;top:4.02px;font-size:3.5px;color:#b4b4ae;letter-spacing:.08px;">Selection</div><div class="t" style="left:50.40px;top:4.02px;font-size:3.5px;color:#b4b4ae;letter-spacing:.08px;">View</div><div class="t" style="left:62.60px;top:4.02px;font-size:3.5px;color:#b4b4ae;letter-spacing:.08px;">Go</div><div class="t" style="left:71.40px;top:4.02px;font-size:3.5px;color:#b4b4ae;letter-spacing:.08px;">Run</div><div class="t" style="left:82.60px;top:4.02px;font-size:3.5px;color:#b4b4ae;letter-spacing:.08px;">Terminal</div><div class="t" style="left:100.60px;top:4.02px;font-size:3.5px;color:#b4b4ae;letter-spacing:.08px;">Help</div><svg style="left:148.5px;top:3.2px" width="4" height="3.2" viewBox="0 0 40 32"><path d="M38 16H4M16 3L3 16l13 13" fill="none" stroke="#9a9a94" stroke-width="3.5"/></svg><svg style="left:156.3px;top:3.2px" width="4" height="3.2" viewBox="0 0 40 32"><path d="M2 16h34M24 3l13 13-13 13" fill="none" stroke="#6a6a64" stroke-width="3.5"/></svg><div class="a" style="left:163px;top:1.6px;width:168px;height:6.5px;border-radius:1.6px;background:#2b2c28;border:.3px solid #383934"></div><svg style="left:236px;top:3.1px" width="3.4" height="3.4" viewBox="0 0 34 34"><circle cx="20" cy="13" r="9" fill="none" stroke="#b5b5ae" stroke-width="3.4"/><path d="M13 20L3 31" stroke="#b5b5ae" stroke-width="3.4"/></svg><div class="t" style="left:241.00px;top:4.02px;font-size:3.3px;color:#b8b8b0;letter-spacing:0.008px;">check_mech</div><div class="a" style="left:413px;top:3px;width:5px;height:4px;border:1px solid #66665f"></div><div class="a" style="left:413px;top:3px;width:2px;height:4px;background:#cfcfc8"></div><div class="a" style="left:420px;top:3px;width:5px;height:4px;border:1px solid #66665f"></div><div class="a" style="left:421px;top:5px;width:3px;height:1px;background:#77776f"></div><div class="a" style="left:427px;top:3px;width:5px;height:4px;border:1px solid #66665f"></div><div class="a" style="left:430px;top:4px;width:1px;height:2px;background:#77776f"></div><div class="a" style="left:435px;top:3px;width:5px;height:4px;border:1px solid #66665f"></div><div class="a" style="left:437px;top:3px;width:1px;height:4px;background:#1e1f1c"></div><div class="a" style="left:445px;top:4px;width:4px;height:1px;background:#6a6a66"></div><div class="a" style="left:458px;top:3px;width:4px;height:4px;border:1px solid #5c5c58"></div><svg style="left:470.7px;top:2.9px" width="3.6" height="3.6" viewBox="0 0 36 36"><path d="M2 2l32 32M34 2L2 34" stroke="#b8b8b2" stroke-width="4"/></svg><div class="a" style="left:0;top:9.6px;width:12.5px;height:372.6px;background:#272822"></div><div class="a" style="left:0;top:10.5px;width:.5px;height:11.5px;background:#f8f8f2"></div><svg style="left:2.8px;top:12.3px" width="7" height="7.4" viewBox="0 0 70 74"><path d="M26 8h22l14 14v30H40" fill="none" stroke="#f2f2ec" stroke-width="6"/><path d="M8 24h24l8 8v34H8z" fill="#272822" stroke="#f2f2ec" stroke-width="6"/></svg><svg style="left:2.8px;top:26px" width="7" height="7.2" viewBox="0 0 70 72"><circle cx="42" cy="27" r="18" fill="none" stroke="#a6a7a1" stroke-width="6"/><path d="M29 41L7 66" stroke="#a6a7a1" stroke-width="6"/></svg><svg style="left:2.8px;top:39.3px" width="7" height="7.6" viewBox="0 0 70 76"><circle cx="20" cy="13" r="8" fill="none" stroke="#a6a7a1" stroke-width="5.5"/><circle cx="20" cy="63" r="8" fill="none" stroke="#a6a7a1" stroke-width="5.5"/><circle cx="52" cy="27" r="8" fill="none" stroke="#a6a7a1" stroke-width="5.5"/><path d="M20 21v34M52 35c0 14-32 8-32 20" fill="none" stroke="#a6a7a1" stroke-width="5.5"/></svg><svg style="left:2.8px;top:53px" width="7.2" height="7.6" viewBox="0 0 72 76"><path d="M26 10l36 26-36 26z" fill="none" stroke="#a6a7a1" stroke-width="5.5" stroke-linejoin="round"/><circle cx="18" cy="56" r="11" fill="#272822" stroke="#a6a7a1" stroke-width="5.5"/></svg><svg style="left:2.8px;top:66.3px" width="7.2" height="7.4" viewBox="0 0 72 74"><path d="M6 26h22v22h22v22H6zM28 48v22M6 48h22" fill="none" stroke="#a6a7a1" stroke-width="5.5"/><rect x="40" y="6" width="22" height="22" fill="none" stroke="#a6a7a1" stroke-width="5.5" transform="rotate(8 51 17)"/></svg><svg style="left:2.9px;top:358.4px" width="7" height="7" viewBox="0 0 70 70"><circle cx="35" cy="35" r="30" fill="none" stroke="#a6a7a1" stroke-width="5.5"/><circle cx="35" cy="27" r="10" fill="none" stroke="#a6a7a1" stroke-width="5.5"/><path d="M14 56c6-14 36-14 42 0" fill="none" stroke="#a6a7a1" stroke-width="5.5"/></svg><svg style="left:2.9px;top:371.2px" width="7" height="7" viewBox="0 0 70 70"><circle cx="35" cy="35" r="24" fill="none" stroke="#a6a7a1" stroke-width="9" stroke-dasharray="10 8.8"/><circle cx="35" cy="35" r="17" fill="none" stroke="#a6a7a1" stroke-width="5"/><circle cx="35" cy="35" r="7" fill="none" stroke="#a6a7a1" stroke-width="4"/></svg><div class="a" style="left:12.5px;top:9.6px;width:65px;height:359.6px;background:#1e1f1c"></div><div class="t" style="left:18.30px;top:14.02px;font-size:2.9px;color:#c4c4bd;letter-spacing:-0.094px;">EXPLORER</div><div class="a" style="left:69.4px;top:14.3px;width:.7px;height:.7px;border-radius:50%;background:#c4c4bd"></div><div class="a" style="left:70.9px;top:14.3px;width:.7px;height:.7px;border-radius:50%;background:#c4c4bd"></div><div class="a" style="left:72.4px;top:14.3px;width:.7px;height:.7px;border-radius:50%;background:#c4c4bd"></div><svg style="left:14.4px;top:21.8px" width="2.8" height="1.9" viewBox="0 0 28 19"><path d="M3 4l11 11L25 4" fill="none" stroke="#c5c5be" stroke-width="3.4"/></svg><div class="t" style="left:18.10px;top:22.02px;font-size:3.05px;color:#d8d8d2;font-weight:bold;letter-spacing:-0.150px;">CHECK_MECH</div><svg style="left:18.4px;top:27.6px" width="2.8" height="1.9" viewBox="0 0 28 19"><path d="M3 4l11 11L25 4" fill="none" stroke="#c5c5be" stroke-width="3.4"/></svg><div class="a" style="left:22.0px;top:27.3px;width:3.3px;height:2.7px;border-radius:.4px;background:#cdd6db"></div><div class="a" style="left:22.0px;top:26.8px;width:1.5px;height:1px;border-radius:.3px .3px 0 0;background:#cdd6db"></div><div class="a" style="left:22.5px;top:28.400000000000002px;width:3.3px;height:1.6px;background:#1e1f1c;opacity:.22;transform:skewX(-20deg)"></div><div class="t" style="left:28.00px;top:28.02px;font-size:3.5px;color:#dcdcd6;letter-spacing:.1px;">administrator</div><svg style="left:20.75px;top:33.760000000000005px" width="2.8" height="1.9" viewBox="0 0 28 19"><path d="M3 4l11 11L25 4" fill="none" stroke="#c5c5be" stroke-width="3.4"/></svg><div class="a" style="left:24.35px;top:33.46000000000001px;width:3.3px;height:2.7px;border-radius:.4px;background:#cdd6db"></div><div class="a" style="left:24.35px;top:32.96000000000001px;width:1.5px;height:1px;border-radius:.3px .3px 0 0;background:#cdd6db"></div><div class="a" style="left:24.85px;top:34.56px;width:3.3px;height:1.6px;background:#1e1f1c;opacity:.22;transform:skewX(-20deg)"></div><div class="t" style="left:30.35px;top:34.02px;font-size:3.5px;color:#dcdcd6;letter-spacing:.1px;">get-data</div><div class="a" style="left:26.4px;top:39.52px;width:4.3px;height:2.6px;border-radius:50%;background:#2f86d0"></div><div class="a" style="left:27.4px;top:40.42px;width:2.3px;height:.7px;background:#9cc8ee;opacity:.8"></div><div class="t" style="left:32.70px;top:40.02px;font-size:3.5px;color:#dcdcd6;letter-spacing:.1px;">get-data-group.php</div><div class="a" style="left:26.4px;top:45.68px;width:4.3px;height:2.6px;border-radius:50%;background:#2f86d0"></div><div class="a" style="left:27.4px;top:46.58px;width:2.3px;height:.7px;background:#9cc8ee;opacity:.8"></div><div class="t" style="left:32.70px;top:46.02px;font-size:3.5px;color:#dcdcd6;letter-spacing:.1px;">get-data-in-group.php</div><div class="a" style="left:26.4px;top:51.84px;width:4.3px;height:2.6px;border-radius:50%;background:#2f86d0"></div><div class="a" style="left:27.4px;top:52.74px;width:2.3px;height:.7px;background:#9cc8ee;opacity:.8"></div><div class="t" style="left:32.70px;top:52.02px;font-size:3.5px;color:#dcdcd6;letter-spacing:.1px;">get-data-machine.php</div><div class="a" style="left:26.4px;top:58.00000000000001px;width:4.3px;height:2.6px;border-radius:50%;background:#2f86d0"></div><div class="a" style="left:27.4px;top:58.900000000000006px;width:2.3px;height:.7px;background:#9cc8ee;opacity:.8"></div><div class="t" style="left:32.70px;top:58.02px;font-size:3.5px;color:#dcdcd6;letter-spacing:.1px;">get-data-motor.php</div><svg style="left:20.75px;top:64.56px" width="2.8" height="1.9" viewBox="0 0 28 19"><path d="M3 4l11 11L25 4" fill="none" stroke="#c5c5be" stroke-width="3.4"/></svg><div class="a" style="left:24.35px;top:64.26px;width:3.3px;height:2.7px;border-radius:.4px;background:#cdd6db"></div><div class="a" style="left:24.35px;top:63.760000000000005px;width:1.5px;height:1px;border-radius:.3px .3px 0 0;background:#cdd6db"></div><div class="a" style="left:24.85px;top:65.36px;width:3.3px;height:1.6px;background:#1e1f1c;opacity:.22;transform:skewX(-20deg)"></div><div class="t" style="left:30.35px;top:65.02px;font-size:3.5px;color:#dcdcd6;letter-spacing:.1px;">group-motor</div><div class="a" style="left:26.4px;top:70.32px;width:4.3px;height:2.6px;border-radius:50%;background:#2f86d0"></div><div class="a" style="left:27.4px;top:71.22px;width:2.3px;height:.7px;background:#9cc8ee;opacity:.8"></div><div class="t" style="left:32.70px;top:71.02px;font-size:3.5px;color:#dcdcd6;letter-spacing:.1px;">index.php</div><svg style="left:20.75px;top:76.88px" width="2.8" height="1.9" viewBox="0 0 28 19"><path d="M3 4l11 11L25 4" fill="none" stroke="#c5c5be" stroke-width="3.4"/></svg><div class="a" style="left:24.35px;top:76.58px;width:3.3px;height:2.7px;border-radius:.4px;background:#cdd6db"></div><div class="a" style="left:24.35px;top:76.08px;width:1.5px;height:1px;border-radius:.3px .3px 0 0;background:#cdd6db"></div><div class="a" style="left:24.85px;top:77.67999999999999px;width:3.3px;height:1.6px;background:#1e1f1c;opacity:.22;transform:skewX(-20deg)"></div><div class="t" style="left:30.35px;top:77.02px;font-size:3.5px;color:#dcdcd6;letter-spacing:.1px;">machine</div><div class="a" style="left:26.4px;top:82.63999999999999px;width:4.3px;height:2.6px;border-radius:50%;background:#2f86d0"></div><div class="a" style="left:27.4px;top:83.53999999999999px;width:2.3px;height:.7px;background:#9cc8ee;opacity:.8"></div><div class="t" style="left:32.70px;top:83.02px;font-size:3.5px;color:#dcdcd6;letter-spacing:.1px;">index.php</div><svg style="left:20.75px;top:89.2px" width="2.8" height="1.9" viewBox="0 0 28 19"><path d="M3 4l11 11L25 4" fill="none" stroke="#c5c5be" stroke-width="3.4"/></svg><div class="a" style="left:24.35px;top:88.9px;width:3.3px;height:2.7px;border-radius:.4px;background:#cdd6db"></div><div class="a" style="left:24.35px;top:88.4px;width:1.5px;height:1px;border-radius:.3px .3px 0 0;background:#cdd6db"></div><div class="a" style="left:24.85px;top:90.0px;width:3.3px;height:1.6px;background:#1e1f1c;opacity:.22;transform:skewX(-20deg)"></div><div class="t" style="left:30.35px;top:89.02px;font-size:3.5px;color:#dcdcd6;letter-spacing:.1px;">section</div><div class="a" style="left:26.4px;top:94.96000000000001px;width:4.3px;height:2.6px;border-radius:50%;background:#2f86d0"></div><div class="a" style="left:27.4px;top:95.86000000000001px;width:2.3px;height:.7px;background:#9cc8ee;opacity:.8"></div><div class="t" style="left:32.70px;top:95.02px;font-size:3.5px;color:#dcdcd6;letter-spacing:.1px;">head.php</div><div class="a" style="left:26.4px;top:101.12px;width:4.3px;height:2.6px;border-radius:50%;background:#2f86d0"></div><div class="a" style="left:27.4px;top:102.02000000000001px;width:2.3px;height:.7px;background:#9cc8ee;opacity:.8"></div><div class="t" style="left:32.70px;top:102.02px;font-size:3.5px;color:#dcdcd6;letter-spacing:.1px;">menu.php</div><div class="a" style="left:26.4px;top:107.28px;width:4.3px;height:2.6px;border-radius:50%;background:#2f86d0"></div><div class="a" style="left:27.4px;top:108.18px;width:2.3px;height:.7px;background:#9cc8ee;opacity:.8"></div><div class="t" style="left:32.70px;top:108.02px;font-size:3.5px;color:#dcdcd6;letter-spacing:.1px;">navbar.php</div><div class="a" style="left:26.4px;top:113.44px;width:4.3px;height:2.6px;border-radius:50%;background:#2f86d0"></div><div class="a" style="left:27.4px;top:114.34px;width:2.3px;height:.7px;background:#9cc8ee;opacity:.8"></div><div class="t" style="left:32.70px;top:114.02px;font-size:3.5px;color:#dcdcd6;letter-spacing:.1px;">script.php</div><svg style="left:21.25px;top:119.6px" width="1.9" height="2.8" viewBox="0 0 19 28"><path d="M4 3l11 11L4 25" fill="none" stroke="#c5c5be" stroke-width="3.4"/></svg><div class="a" style="left:24.35px;top:119.7px;width:3.3px;height:2.7px;border-radius:.4px;background:#c3ccd2"></div><div class="a" style="left:24.35px;top:119.2px;width:1.5px;height:1px;border-radius:.3px .3px 0 0;background:#c3ccd2"></div><div class="t" style="left:30.35px;top:120.02px;font-size:3.5px;color:#dcdcd6;letter-spacing:.1px;">setting-account</div><svg style="left:20.75px;top:126.16px" width="2.8" height="1.9" viewBox="0 0 28 19"><path d="M3 4l11 11L25 4" fill="none" stroke="#c5c5be" stroke-width="3.4"/></svg><div class="a" style="left:24.35px;top:125.86px;width:3.3px;height:2.7px;border-radius:.4px;background:#cdd6db"></div><div class="a" style="left:24.35px;top:125.36px;width:1.5px;height:1px;border-radius:.3px .3px 0 0;background:#cdd6db"></div><div class="a" style="left:24.85px;top:126.96px;width:3.3px;height:1.6px;background:#1e1f1c;opacity:.22;transform:skewX(-20deg)"></div><div class="t" style="left:30.35px;top:126.02px;font-size:3.5px;color:#dcdcd6;letter-spacing:.1px;">setting-check-list</div><div class="a" style="left:26.4px;top:131.92px;width:4.3px;height:2.6px;border-radius:50%;background:#2f86d0"></div><div class="a" style="left:27.4px;top:132.82px;width:2.3px;height:.7px;background:#9cc8ee;opacity:.8"></div><div class="t" style="left:32.70px;top:132.02px;font-size:3.5px;color:#dcdcd6;letter-spacing:.1px;">edit.php</div><div class="a" style="left:26.4px;top:138.07999999999998px;width:4.3px;height:2.6px;border-radius:50%;background:#2f86d0"></div><div class="a" style="left:27.4px;top:138.98px;width:2.3px;height:.7px;background:#9cc8ee;opacity:.8"></div><div class="t" style="left:32.70px;top:138.02px;font-size:3.5px;color:#dcdcd6;letter-spacing:.1px;">insert.php</div><div class="a" style="left:26.4px;top:144.24px;width:4.3px;height:2.6px;border-radius:50%;background:#2f86d0"></div><div class="a" style="left:27.4px;top:145.14000000000001px;width:2.3px;height:.7px;background:#9cc8ee;opacity:.8"></div><div class="t" style="left:32.70px;top:145.02px;font-size:3.5px;color:#dcdcd6;letter-spacing:.1px;">read.php</div><svg style="left:21.25px;top:150.4px" width="1.9" height="2.8" viewBox="0 0 19 28"><path d="M4 3l11 11L4 25" fill="none" stroke="#c5c5be" stroke-width="3.4"/></svg><div class="a" style="left:24.35px;top:150.5px;width:3.3px;height:2.7px;border-radius:.4px;background:#c3ccd2"></div><div class="a" style="left:24.35px;top:150.0px;width:1.5px;height:1px;border-radius:.3px .3px 0 0;background:#c3ccd2"></div><div class="t" style="left:30.35px;top:151.02px;font-size:3.5px;color:#dcdcd6;letter-spacing:.1px;">setting-company</div><svg style="left:21.25px;top:156.56px" width="1.9" height="2.8" viewBox="0 0 19 28"><path d="M4 3l11 11L4 25" fill="none" stroke="#c5c5be" stroke-width="3.4"/></svg><div class="a" style="left:24.35px;top:156.66px;width:3.3px;height:2.7px;border-radius:.4px;background:#c3ccd2"></div><div class="a" style="left:24.35px;top:156.16px;width:1.5px;height:1px;border-radius:.3px .3px 0 0;background:#c3ccd2"></div><div class="t" style="left:30.35px;top:157.02px;font-size:3.5px;color:#dcdcd6;letter-spacing:.1px;">setting-department</div><svg style="left:21.25px;top:162.72px" width="1.9" height="2.8" viewBox="0 0 19 28"><path d="M4 3l11 11L4 25" fill="none" stroke="#c5c5be" stroke-width="3.4"/></svg><div class="a" style="left:24.35px;top:162.82px;width:3.3px;height:2.7px;border-radius:.4px;background:#c3ccd2"></div><div class="a" style="left:24.35px;top:162.32px;width:1.5px;height:1px;border-radius:.3px .3px 0 0;background:#c3ccd2"></div><div class="t" style="left:30.35px;top:163.02px;font-size:3.5px;color:#dcdcd6;letter-spacing:.1px;">setting-factory</div><svg style="left:20.75px;top:169.28px" width="2.8" height="1.9" viewBox="0 0 28 19"><path d="M3 4l11 11L25 4" fill="none" stroke="#c5c5be" stroke-width="3.4"/></svg><div class="a" style="left:24.35px;top:168.98px;width:3.3px;height:2.7px;border-radius:.4px;background:#cdd6db"></div><div class="a" style="left:24.35px;top:168.48px;width:1.5px;height:1px;border-radius:.3px .3px 0 0;background:#cdd6db"></div><div class="a" style="left:24.85px;top:170.08px;width:3.3px;height:1.6px;background:#1e1f1c;opacity:.22;transform:skewX(-20deg)"></div><div class="t" style="left:30.35px;top:169.02px;font-size:3.5px;color:#dcdcd6;letter-spacing:.1px;">setting-group</div><div class="a" style="left:26.4px;top:175.04px;width:4.3px;height:2.6px;border-radius:50%;background:#2f86d0"></div><div class="a" style="left:27.4px;top:175.94px;width:2.3px;height:.7px;background:#9cc8ee;opacity:.8"></div><div class="t" style="left:32.70px;top:175.02px;font-size:3.5px;color:#dcdcd6;letter-spacing:.1px;">delete.php</div><div class="a" style="left:26.4px;top:181.2px;width:4.3px;height:2.6px;border-radius:50%;background:#2f86d0"></div><div class="a" style="left:27.4px;top:182.1px;width:2.3px;height:.7px;background:#9cc8ee;opacity:.8"></div><div class="t" style="left:32.70px;top:182.02px;font-size:3.5px;color:#dcdcd6;letter-spacing:.1px;">edit.php</div><div class="a" style="left:26.4px;top:187.35999999999999px;width:4.3px;height:2.6px;border-radius:50%;background:#2f86d0"></div><div class="a" style="left:27.4px;top:188.26px;width:2.3px;height:.7px;background:#9cc8ee;opacity:.8"></div><div class="t" style="left:32.70px;top:188.02px;font-size:3.5px;color:#dcdcd6;letter-spacing:.1px;">insert.php</div><div class="a" style="left:26.4px;top:193.51999999999998px;width:4.3px;height:2.6px;border-radius:50%;background:#2f86d0"></div><div class="a" style="left:27.4px;top:194.42px;width:2.3px;height:.7px;background:#9cc8ee;opacity:.8"></div><div class="t" style="left:32.70px;top:194.02px;font-size:3.5px;color:#dcdcd6;letter-spacing:.1px;">read.php</div><svg style="left:21.25px;top:199.68px" width="1.9" height="2.8" viewBox="0 0 19 28"><path d="M4 3l11 11L4 25" fill="none" stroke="#c5c5be" stroke-width="3.4"/></svg><div class="a" style="left:24.35px;top:199.78px;width:3.3px;height:2.7px;border-radius:.4px;background:#c3ccd2"></div><div class="a" style="left:24.35px;top:199.28px;width:1.5px;height:1px;border-radius:.3px .3px 0 0;background:#c3ccd2"></div><div class="t" style="left:30.35px;top:200.02px;font-size:3.5px;color:#dcdcd6;letter-spacing:.1px;">setting-machine</div><div class="a" style="left:24.05px;top:205.84px;width:4.3px;height:2.6px;border-radius:50%;background:#2f86d0"></div><div class="a" style="left:25.05px;top:206.74px;width:2.3px;height:.7px;background:#9cc8ee;opacity:.8"></div><div class="t" style="left:30.35px;top:206.02px;font-size:3.5px;color:#dcdcd6;letter-spacing:.1px;">home.php</div><div class="a" style="left:24.05px;top:212.0px;width:4.3px;height:2.6px;border-radius:50%;background:#2f86d0"></div><div class="a" style="left:25.05px;top:212.9px;width:2.3px;height:.7px;background:#9cc8ee;opacity:.8"></div><div class="t" style="left:30.35px;top:212.02px;font-size:3.5px;color:#dcdcd6;letter-spacing:.1px;">index.php</div><svg style="left:18.9px;top:218.16px" width="1.9" height="2.8" viewBox="0 0 19 28"><path d="M4 3l11 11L4 25" fill="none" stroke="#c5c5be" stroke-width="3.4"/></svg><div class="a" style="left:22.0px;top:218.26px;width:3.3px;height:2.7px;border-radius:.4px;background:#c3ccd2"></div><div class="a" style="left:22.0px;top:217.76px;width:1.5px;height:1px;border-radius:.3px .3px 0 0;background:#c3ccd2"></div><div class="t" style="left:28.00px;top:219.02px;font-size:3.5px;color:#dcdcd6;letter-spacing:.1px;">connect</div><svg style="left:18.9px;top:224.32px" width="1.9" height="2.8" viewBox="0 0 19 28"><path d="M4 3l11 11L4 25" fill="none" stroke="#c5c5be" stroke-width="3.4"/></svg><div class="a" style="left:22.0px;top:224.42px;width:3.3px;height:2.7px;border-radius:.4px;background:#4fc3f7"></div><div class="a" style="left:22.0px;top:223.92px;width:1.5px;height:1px;border-radius:.3px .3px 0 0;background:#4fc3f7"></div><div class="t" style="left:28.00px;top:225.02px;font-size:3.5px;color:#dcdcd6;letter-spacing:.1px;">plugin</div><div class="a" style="left:12.5px;top:228.79999999999998px;width:65px;height:6.16px;background:#414339"></div><svg style="left:18.4px;top:230.88px" width="2.8" height="1.9" viewBox="0 0 28 19"><path d="M3 4l11 11L25 4" fill="none" stroke="#c5c5be" stroke-width="3.4"/></svg><div class="a" style="left:22.0px;top:230.57999999999998px;width:3.3px;height:2.7px;border-radius:.4px;background:#ff8a65"></div><div class="a" style="left:22.0px;top:230.07999999999998px;width:1.5px;height:1px;border-radius:.3px .3px 0 0;background:#ff8a65"></div><div class="a" style="left:22.5px;top:231.68px;width:3.3px;height:1.6px;background:#1e1f1c;opacity:.22;transform:skewX(-20deg)"></div><div class="t" style="left:28.00px;top:231.02px;font-size:3.5px;color:#dcdcd6;letter-spacing:.1px;">uploads</div><svg style="left:21.25px;top:236.64px" width="1.9" height="2.8" viewBox="0 0 19 28"><path d="M4 3l11 11L4 25" fill="none" stroke="#c5c5be" stroke-width="3.4"/></svg><div class="a" style="left:24.35px;top:236.73999999999998px;width:3.3px;height:2.7px;border-radius:.4px;background:#c3ccd2"></div><div class="a" style="left:24.35px;top:236.23999999999998px;width:1.5px;height:1px;border-radius:.3px .3px 0 0;background:#c3ccd2"></div><div class="t" style="left:30.35px;top:237.02px;font-size:3.5px;color:#dcdcd6;letter-spacing:.1px;">account</div><svg style="left:21.25px;top:242.79999999999998px" width="1.9" height="2.8" viewBox="0 0 19 28"><path d="M4 3l11 11L4 25" fill="none" stroke="#c5c5be" stroke-width="3.4"/></svg><div class="a" style="left:24.35px;top:242.89999999999998px;width:3.3px;height:2.7px;border-radius:.4px;background:#c3ccd2"></div><div class="a" style="left:24.35px;top:242.39999999999998px;width:1.5px;height:1px;border-radius:.3px .3px 0 0;background:#c3ccd2"></div><div class="t" style="left:30.35px;top:243.02px;font-size:3.5px;color:#dcdcd6;letter-spacing:.1px;">factory</div><svg style="left:21.25px;top:248.95999999999998px" width="1.9" height="2.8" viewBox="0 0 19 28"><path d="M4 3l11 11L4 25" fill="none" stroke="#c5c5be" stroke-width="3.4"/></svg><div class="a" style="left:24.35px;top:249.05999999999997px;width:3.3px;height:2.7px;border-radius:.4px;background:#c3ccd2"></div><div class="a" style="left:24.35px;top:248.55999999999997px;width:1.5px;height:1px;border-radius:.3px .3px 0 0;background:#c3ccd2"></div><div class="t" style="left:30.35px;top:249.02px;font-size:3.5px;color:#dcdcd6;letter-spacing:.1px;">group</div><div class="a" style="left:22.599999999999998px;top:254.62000000000003px;width:2.9px;height:3.8px;border-radius:1.2px/.8px;background:#f5c43a"></div><div class="t" style="left:28.00px;top:256.02px;font-size:3.5px;color:#dcdcd6;letter-spacing:.1px;">check_mech.sql</div><div class="a" style="left:21.7px;top:261.28000000000003px;width:4.3px;height:2.6px;border-radius:50%;background:#2f86d0"></div><div class="a" style="left:22.7px;top:262.18px;width:2.3px;height:.7px;background:#9cc8ee;opacity:.8"></div><div class="t" style="left:28.00px;top:262.02px;font-size:3.5px;color:#dcdcd6;letter-spacing:.1px;">index.php</div><div class="a" style="left:21.7px;top:267.44000000000005px;width:4.3px;height:2.6px;border-radius:50%;background:#2f86d0"></div><div class="a" style="left:22.7px;top:268.34000000000003px;width:2.3px;height:.7px;background:#9cc8ee;opacity:.8"></div><div class="t" style="left:28.00px;top:268.02px;font-size:3.5px;color:#dcdcd6;letter-spacing:.1px;">logout.php</div><div class="a" style="left:12.5px;top:375.6px;width:65px;height:.35px;background:#34352f"></div><svg style="left:14.3px;top:371.3px" width="1.9" height="2.8" viewBox="0 0 19 28"><path d="M4 3l11 11L4 25" fill="none" stroke="#c5c5be" stroke-width="3.4"/></svg><div class="t" style="left:18.10px;top:372.02px;font-size:2.9px;color:#d0d0ca;font-weight:bold;letter-spacing:.06px;">OUTLINE</div><svg style="left:14.3px;top:377.3px" width="1.9" height="2.8" viewBox="0 0 19 28"><path d="M4 3l11 11L4 25" fill="none" stroke="#c5c5be" stroke-width="3.4"/></svg><div class="t" style="left:18.10px;top:378.02px;font-size:2.9px;color:#d0d0ca;font-weight:bold;letter-spacing:.06px;">TIMELINE</div><div class="a" style="left:77.5px;top:9.6px;width:401.5px;height:9.4px;background:#1e1f1c"></div><div class="a" style="left:77.5px;top:9.6px;width:35.5px;height:9.4px;background:#2f302b"></div><div class="a" style="left:80.00000000000004px;top:13.3px;width:4.4px;height:2.7px;border-radius:50%;background:#3585cc"></div><div class="t" style="left:87.00px;top:14.02px;font-size:3.5px;color:#bdbdb6;letter-spacing:.1px;">insert.php</div><div class="a" style="left:113.20000000000005px;top:9.6px;width:31.299999999999955px;height:9.4px;background:#2f302b"></div><div class="a" style="left:113.59999999999995px;top:13.3px;width:4.4px;height:2.7px;border-radius:50%;background:#3585cc"></div><div class="t" style="left:120.50px;top:14.02px;font-size:3.5px;color:#bdbdb6;letter-spacing:.1px;">index.php</div><div class="a" style="left:144.70000000000005px;top:9.6px;width:48.799999999999955px;height:9.4px;background:#272822"></div><div class="a" style="left:147.50000000000006px;top:13.3px;width:4.4px;height:2.7px;border-radius:50%;background:#3585cc"></div><div class="t" style="left:153.80px;top:14.02px;font-size:3.5px;color:#ffffff;letter-spacing:.1px;">get-data-motor.php</div><svg style="left:188.6px;top:13.4px" width="2.7" height="2.7" viewBox="0 0 27 27"><path d="M3 3l21 21M24 3L3 24" stroke="#f0f0ea" stroke-width="4.4"/></svg><div class="a" style="left:193.70000000000005px;top:9.6px;width:32.799999999999955px;height:9.4px;background:#2f302b"></div><div class="a" style="left:195.09999999999997px;top:13.3px;width:4.4px;height:2.7px;border-radius:50%;background:#3585cc"></div><div class="t" style="left:202.00px;top:14.02px;font-size:3.5px;color:#bdbdb6;letter-spacing:.1px;">script.php</div><div class="a" style="left:226.70000000000005px;top:9.6px;width:33.299999999999955px;height:9.4px;background:#2f302b"></div><div class="a" style="left:230.8px;top:13.3px;width:4.4px;height:2.7px;border-radius:50%;background:#3585cc"></div><div class="t" style="left:236.80px;top:14.02px;font-size:3.5px;color:#bdbdb6;letter-spacing:.1px;">edit.php</div><svg style="left:452.2px;top:12.3px" width="3.6" height="4" viewBox="0 0 36 40"><path d="M5 4l26 16L5 36z" fill="none" stroke="#d5d5ce" stroke-width="5"/></svg><svg style="left:457.2px;top:13.8px" width="1.8" height="1.2" viewBox="0 0 18 12"><path d="M2 2l7 7 7-7" fill="none" stroke="#c5c5be" stroke-width="3"/></svg><div class="a" style="left:462.6px;top:12.2px;width:4.8px;height:4.4px;border:1px solid #6f6b85;border-radius:.7px;background:#35334a"></div><div class="a" style="left:464.7px;top:12.2px;width:.6px;height:4.4px;background:#6f6b85"></div><div class="a" style="left:471.6px;top:14.1px;width:.7px;height:.7px;border-radius:50%;background:#8a8a84"></div><div class="a" style="left:473.1px;top:14.1px;width:.7px;height:.7px;border-radius:50%;background:#8a8a84"></div><div class="a" style="left:474.6px;top:14.1px;width:.7px;height:.7px;border-radius:50%;background:#8a8a84"></div><div class="t" style="left:82.40px;top:21.02px;font-size:3.3px;color:#c2c2ba;letter-spacing:0.041px;">administrator</div><svg style="left:104.60000000000005px;top:21.2px" width="1.5" height="2.6" viewBox="0 0 15 26"><path d="M3 3l9 10-9 10" fill="none" stroke="#9a9a94" stroke-width="3"/></svg><div class="t" style="left:108.50px;top:21.02px;font-size:3.3px;color:#c2c2ba;letter-spacing:0.099px;">get-data</div><svg style="left:123.00000000000003px;top:21.2px" width="1.5" height="2.6" viewBox="0 0 15 26"><path d="M3 3l9 10-9 10" fill="none" stroke="#9a9a94" stroke-width="3"/></svg><div class="a" style="left:126.10000000000005px;top:21.1px;width:4.2px;height:2.6px;border-radius:50%;background:#3585cc"></div><div class="t" style="left:132.80px;top:21.02px;font-size:3.3px;color:#c2c2ba;letter-spacing:0.147px;">get-data-motor.php</div><svg style="left:165.79999999999998px;top:21.2px" width="1.5" height="2.6" viewBox="0 0 15 26"><path d="M3 3l9 10-9 10" fill="none" stroke="#9a9a94" stroke-width="3"/></svg><div class="a" style="left:168.90000000000003px;top:20.8px;width:3.4px;height:3.4px;border-radius:50%;border:.65px solid #4f9fe8"></div><div class="t" style="left:174.70px;top:21.02px;font-size:3.3px;color:#c2c2ba;letter-spacing:0.163px;">div.container-fluid.flex-grow-1.container-p-y</div><svg style="left:247.19999999999996px;top:21.2px" width="1.5" height="2.6" viewBox="0 0 15 26"><path d="M3 3l9 10-9 10" fill="none" stroke="#9a9a94" stroke-width="3"/></svg><div class="a" style="left:249.50000000000006px;top:20.8px;width:3.4px;height:3.4px;border-radius:50%;border:.65px solid #4f9fe8"></div><div class="t" style="left:255.00px;top:21.02px;font-size:3.3px;color:#c2c2ba;letter-spacing:0.300px;">div.row</div><svg style="left:269.4px;top:21.2px" width="1.5" height="2.6" viewBox="0 0 15 26"><path d="M3 3l9 10-9 10" fill="none" stroke="#9a9a94" stroke-width="3"/></svg><div class="a" style="left:271.00000000000006px;top:20.8px;width:3.4px;height:3.4px;border-radius:50%;border:.65px solid #4f9fe8"></div><div class="t" style="left:276.70px;top:21.02px;font-size:3.3px;color:#c2c2ba;letter-spacing:0.171px;">div.col-xl</div><svg style="left:293.1px;top:21.2px" width="1.5" height="2.6" viewBox="0 0 15 26"><path d="M3 3l9 10-9 10" fill="none" stroke="#9a9a94" stroke-width="3"/></svg><div class="a" style="left:295.40000000000003px;top:20.8px;width:3.4px;height:3.4px;border-radius:50%;border:.65px solid #4f9fe8"></div><div class="t" style="left:301.00px;top:21.02px;font-size:3.3px;color:#c2c2ba;letter-spacing:0.113px;">div.card.mb-4</div><svg style="left:324.29999999999995px;top:21.2px" width="1.5" height="2.6" viewBox="0 0 15 26"><path d="M3 3l9 10-9 10" fill="none" stroke="#9a9a94" stroke-width="3"/></svg><div class="a" style="left:326.90000000000003px;top:20.8px;width:3.4px;height:3.4px;border-radius:50%;border:.65px solid #4f9fe8"></div><div class="t" style="left:332.60px;top:21.02px;font-size:3.3px;color:#c2c2ba;letter-spacing:0.143px;">div.card-body</div><svg style="left:356.1px;top:21.2px" width="1.5" height="2.6" viewBox="0 0 15 26"><path d="M3 3l9 10-9 10" fill="none" stroke="#9a9a94" stroke-width="3"/></svg><div class="a" style="left:358.90000000000003px;top:20.8px;width:3.4px;height:3.4px;border-radius:50%;border:.65px solid #4f9fe8"></div><div class="t" style="left:364.40px;top:21.02px;font-size:3.3px;color:#c2c2ba;letter-spacing:0.150px;">div.row.w-75.mx-auto</div><svg style="left:400.4px;top:21.2px" width="1.5" height="2.6" viewBox="0 0 15 26"><path d="M3 3l9 10-9 10" fill="none" stroke="#9a9a94" stroke-width="3"/></svg><div class="a" style="left:403.2px;top:20.8px;width:3.4px;height:3.4px;border-radius:50%;border:.65px solid #4f9fe8"></div><div class="t" style="left:408.70px;top:21.02px;font-size:3.3px;color:#c2c2ba;letter-spacing:0.129px;">img</div><div class="a" style="left:96.9px;top:158.15px;width:345.2px;height:5.3px;background:#3e3d32"></div><div class="ln" style="top:26.02px;color:#9c9c96">1</div><div class="code" style="top:26.02px"><span class="p">&lt;?php</span> <span class="p">include</span><span class="k1">(</span><span class="y">'../../connect/conn.php'</span><span class="k1">)</span> <span class="p">?&gt;</span></div><div class="ln" style="top:32.02px;color:#9c9c96">2</div><div class="ln" style="top:37.02px;color:#9c9c96">3</div><div class="code" style="top:37.02px">&lt;<span class="p">div</span> <span class="g">class</span>=<span class="y">"container-fluid flex-grow-1 container-p-y"</span>&gt;</div><div class="ln" style="top:42.02px;color:#9c9c96">4</div><div class="a" style="left:96.9px;top:41.75px;width:0.90px;height:5.3px;background:repeating-linear-gradient(90deg,#363731 0 .85px,transparent .85px 8.593px)"></div><div class="ln" style="top:48.02px;color:#9c9c96">5</div><div class="a" style="left:96.9px;top:47.050000000000004px;width:0.90px;height:5.3px;background:repeating-linear-gradient(90deg,#363731 0 .85px,transparent .85px 8.593px)"></div><div class="code" style="top:48.02px">    <span class="p">&lt;?php</span> <span class="p">if</span> <span class="k1">(</span><span class="b">isset</span><span class="k2">(</span>$_GET<span class="k3">[</span><span class="y">'group_id'</span><span class="k3">]</span><span class="k2">)</span> <span class="q">&amp;&amp;</span> <span class="q">!</span><span class="b">empty</span><span class="k2">(</span>$_GET<span class="k3">[</span><span class="y">'group_id'</span><span class="k3">]</span><span class="k2">)</span><span class="k1">)</span> <span class="k1">{</span> <span class="p">?&gt;</span></div><div class="ln" style="top:53.02px;color:#9c9c96">6</div><div class="a" style="left:96.9px;top:52.35px;width:9.49px;height:5.3px;background:repeating-linear-gradient(90deg,#363731 0 .85px,transparent .85px 8.593px)"></div><div class="code" style="top:53.02px">        <span class="p">&lt;?php</span></div><div class="ln" style="top:58.02px;color:#9c9c96">7</div><div class="a" style="left:96.9px;top:57.65px;width:9.49px;height:5.3px;background:repeating-linear-gradient(90deg,#363731 0 .85px,transparent .85px 8.593px)"></div><div class="code" style="top:58.02px">        $id <span class="q">=</span> $_GET<span class="k2">[</span><span class="y">'group_id'</span><span class="k2">]</span>;</div><div class="ln" style="top:64.02px;color:#9c9c96">8</div><div class="a" style="left:96.9px;top:62.949999999999996px;width:9.49px;height:5.3px;background:repeating-linear-gradient(90deg,#363731 0 .85px,transparent .85px 8.593px)"></div><div class="ln" style="top:69.02px;color:#9c9c96">9</div><div class="a" style="left:96.9px;top:68.25px;width:9.49px;height:5.3px;background:repeating-linear-gradient(90deg,#363731 0 .85px,transparent .85px 8.593px)"></div><div class="code" style="top:69.02px">        $qry_group <span class="q">=</span> $conn<span class="q">-&gt;</span><span class="g">query</span><span class="k2">(</span><span class="y">"</span><span class="p">SELECT</span><span class="y"> </span><span class="p">*</span><span class="y"> </span><span class="p">FROM</span><span class="y"> t_group </span><span class="p">WHERE</span><span class="y"> group_id </span><span class="p">=</span><span class="y"> '$id'"</span><span class="k2">)</span>;</div><div class="ln" style="top:74.02px;color:#9c9c96">10</div><div class="a" style="left:96.9px;top:73.54999999999998px;width:9.49px;height:5.3px;background:repeating-linear-gradient(90deg,#363731 0 .85px,transparent .85px 8.593px)"></div><div class="code" style="top:74.02px">        $qry_group<span class="q">-&gt;</span><span class="g">execute</span><span class="k2">()</span>;</div><div class="ln" style="top:79.02px;color:#9c9c96">11</div><div class="a" style="left:96.9px;top:78.85px;width:9.49px;height:5.3px;background:repeating-linear-gradient(90deg,#363731 0 .85px,transparent .85px 8.593px)"></div><div class="code" style="top:79.02px">        $group <span class="q">=</span> $qry_group<span class="q">-&gt;</span><span class="g">fetch</span><span class="k2">(</span><span class="b">PDO</span><span class="q">::</span><span class="v">FETCH_ASSOC</span><span class="k2">)</span>;</div><div class="ln" style="top:85.02px;color:#9c9c96">12</div><div class="a" style="left:96.9px;top:84.14999999999999px;width:9.49px;height:5.3px;background:repeating-linear-gradient(90deg,#363731 0 .85px,transparent .85px 8.593px)"></div><div class="ln" style="top:90.02px;color:#9c9c96">13</div><div class="a" style="left:96.9px;top:89.44999999999999px;width:9.49px;height:5.3px;background:repeating-linear-gradient(90deg,#363731 0 .85px,transparent .85px 8.593px)"></div><div class="ln" style="top:95.02px;color:#9c9c96">14</div><div class="a" style="left:96.9px;top:94.74999999999999px;width:9.49px;height:5.3px;background:repeating-linear-gradient(90deg,#363731 0 .85px,transparent .85px 8.593px)"></div><div class="code" style="top:95.02px">        <span class="c">/*$qry = $conn-&gt;query("SELECT * FROM t WHERE group_id = '$id'");</span></div><div class="ln" style="top:101.02px;color:#9c9c96">15</div><div class="a" style="left:96.9px;top:100.05px;width:9.49px;height:5.3px;background:repeating-linear-gradient(90deg,#363731 0 .85px,transparent .85px 8.593px)"></div><div class="code" style="top:101.02px">        <span class="c">$qry-&gt;execute();</span></div><div class="ln" style="top:106.02px;color:#9c9c96">16</div><div class="a" style="left:96.9px;top:105.35px;width:9.49px;height:5.3px;background:repeating-linear-gradient(90deg,#363731 0 .85px,transparent .85px 8.593px)"></div><div class="code" style="top:106.02px">        <span class="c">$motor = $qry-&gt;fetchAll(PDO::FETCH_ASSOC);*/</span></div><div class="ln" style="top:111.02px;color:#9c9c96">17</div><div class="a" style="left:96.9px;top:110.64999999999999px;width:9.49px;height:5.3px;background:repeating-linear-gradient(90deg,#363731 0 .85px,transparent .85px 8.593px)"></div><div class="code" style="top:111.02px">        <span class="p">?&gt;</span></div><div class="ln" style="top:117.02px;color:#9c9c96">18</div><div class="a" style="left:96.9px;top:115.94999999999999px;width:9.49px;height:5.3px;background:repeating-linear-gradient(90deg,#363731 0 .85px,transparent .85px 8.593px)"></div><div class="ln" style="top:122.02px;color:#9c9c96">19</div><div class="a" style="left:96.9px;top:121.24999999999999px;width:9.49px;height:5.3px;background:repeating-linear-gradient(90deg,#363731 0 .85px,transparent .85px 8.593px)"></div><div class="code" style="top:122.02px">        <span class="p">&lt;?php</span> <span class="p">if</span> <span class="k2">(</span><span class="q">!</span><span class="b">empty</span><span class="k3">(</span>$group<span class="k3">)</span><span class="k2">)</span> <span class="k2">{</span> <span class="p">?&gt;</span></div><div class="ln" style="top:127.02px;color:#9c9c96">20</div><div class="a" style="left:96.9px;top:126.54999999999998px;width:18.09px;height:5.3px;background:repeating-linear-gradient(90deg,#363731 0 .85px,transparent .85px 8.593px)"></div><div class="ln" style="top:132.02px;color:#9c9c96">21</div><div class="a" style="left:96.9px;top:131.85px;width:18.09px;height:5.3px;background:repeating-linear-gradient(90deg,#363731 0 .85px,transparent .85px 8.593px)"></div><div class="code" style="top:132.02px">            &lt;<span class="p">div</span> <span class="g">class</span>=<span class="y">"row"</span>&gt;</div><div class="ln" style="top:138.02px;color:#9c9c96">22</div><div class="a" style="left:96.9px;top:137.15px;width:26.68px;height:5.3px;background:repeating-linear-gradient(90deg,#363731 0 .85px,transparent .85px 8.593px)"></div><div class="code" style="top:138.02px">                &lt;<span class="p">div</span> <span class="g">class</span>=<span class="y">"col-xl"</span>&gt;</div><div class="ln" style="top:143.02px;color:#9c9c96">23</div><div class="a" style="left:96.9px;top:142.45px;width:35.27px;height:5.3px;background:repeating-linear-gradient(90deg,#363731 0 .85px,transparent .85px 8.593px)"></div><div class="code" style="top:143.02px">                    &lt;<span class="p">div</span> <span class="g">class</span>=<span class="y">"card mb-4"</span>&gt;</div><div class="ln" style="top:148.02px;color:#9c9c96">24</div><div class="a" style="left:96.9px;top:147.74999999999997px;width:43.86px;height:5.3px;background:repeating-linear-gradient(90deg,#363731 0 .85px,transparent .85px 8.593px)"></div><div class="code" style="top:148.02px">                        &lt;<span class="p">div</span> <span class="g">class</span>=<span class="y">"card-body"</span>&gt;</div><div class="ln" style="top:154.02px;color:#9c9c96">25</div><div class="a" style="left:96.9px;top:153.04999999999998px;width:52.46px;height:5.3px;background:repeating-linear-gradient(90deg,#363731 0 .85px,transparent .85px 8.593px)"></div><div class="code" style="top:154.02px">                            &lt;<span class="p">div</span> <span class="g">class</span>=<span class="y">"row w-75 mx-auto"</span>&gt;</div><div class="ln" style="top:159.02px;color:#d0d0cc">26</div><div class="a" style="left:96.9px;top:158.35px;width:61.05px;height:5.3px;background:repeating-linear-gradient(90deg,#363731 0 .85px,transparent .85px 8.593px)"></div><div class="code" style="top:159.02px">                                &lt;<span class="p">img</span> <span class="g">src</span>=<span class="y">"../uploads/group/</span><span class="p">&lt;?php</span> <span class="b">echo</span> $group<span class="k3">[</span><span class="y">'group_img'</span><span class="k3">]</span> <span class="p">?&gt;</span><span class="y">"</span> <span class="g">alt</span>=<span class="y">"Your Image"</span> <span class="g">width</span>=<span class="y">"100px;"</span>&gt;</div><div class="ln" style="top:164.02px;color:#9c9c96">27</div><div class="a" style="left:96.9px;top:163.64999999999998px;width:52.46px;height:5.3px;background:repeating-linear-gradient(90deg,#363731 0 .85px,transparent .85px 8.593px)"></div><div class="code" style="top:164.02px">                            &lt;/<span class="p">div</span>&gt;</div><div class="ln" style="top:170.02px;color:#9c9c96">28</div><div class="a" style="left:96.9px;top:168.95px;width:43.86px;height:5.3px;background:repeating-linear-gradient(90deg,#363731 0 .85px,transparent .85px 8.593px)"></div><div class="code" style="top:170.02px">                        &lt;/<span class="p">div</span>&gt;</div><div class="ln" style="top:175.02px;color:#9c9c96">29</div><div class="a" style="left:96.9px;top:174.25px;width:35.27px;height:5.3px;background:repeating-linear-gradient(90deg,#363731 0 .85px,transparent .85px 8.593px)"></div><div class="code" style="top:175.02px">                    &lt;/<span class="p">div</span>&gt;</div><div class="ln" style="top:180.02px;color:#9c9c96">30</div><div class="a" style="left:96.9px;top:179.54999999999998px;width:26.68px;height:5.3px;background:repeating-linear-gradient(90deg,#363731 0 .85px,transparent .85px 8.593px)"></div><div class="code" style="top:180.02px">                &lt;/<span class="p">div</span>&gt;</div><div class="ln" style="top:185.02px;color:#9c9c96">31</div><div class="a" style="left:96.9px;top:184.85px;width:18.09px;height:5.3px;background:repeating-linear-gradient(90deg,#363731 0 .85px,transparent .85px 8.593px)"></div><div class="code" style="top:185.02px">            &lt;/<span class="p">div</span>&gt;</div><div class="ln" style="top:191.02px;color:#9c9c96">32</div><div class="a" style="left:96.9px;top:190.14999999999998px;width:18.09px;height:5.3px;background:repeating-linear-gradient(90deg,#363731 0 .85px,transparent .85px 8.593px)"></div><div class="ln" style="top:196.02px;color:#9c9c96">33</div><div class="a" style="left:96.9px;top:195.45px;width:18.09px;height:5.3px;background:repeating-linear-gradient(90deg,#363731 0 .85px,transparent .85px 8.593px)"></div><div class="code" style="top:196.02px">            <span class="c">&lt;!-- Section Table --&gt;</span></div><div class="ln" style="top:201.02px;color:#9c9c96">34</div><div class="a" style="left:96.9px;top:200.75px;width:18.09px;height:5.3px;background:repeating-linear-gradient(90deg,#363731 0 .85px,transparent .85px 8.593px)"></div><div class="code" style="top:201.02px">            &lt;<span class="p">div</span> <span class="g">class</span>=<span class="y">"row mt-2"</span>&gt;</div><div class="ln" style="top:207.02px;color:#9c9c96">35</div><div class="a" style="left:96.9px;top:206.04999999999998px;width:26.68px;height:5.3px;background:repeating-linear-gradient(90deg,#363731 0 .85px,transparent .85px 8.593px)"></div><div class="code" style="top:207.02px">                &lt;<span class="p">div</span> <span class="g">class</span>=<span class="y">"col-xl"</span>&gt;</div><div class="ln" style="top:212.02px;color:#9c9c96">36</div><div class="a" style="left:96.9px;top:211.35px;width:35.27px;height:5.3px;background:repeating-linear-gradient(90deg,#363731 0 .85px,transparent .85px 8.593px)"></div><div class="code" style="top:212.02px">                    &lt;<span class="p">div</span> <span class="g">class</span>=<span class="y">"card mb-4"</span>&gt;</div><div class="ln" style="top:217.02px;color:#9c9c96">37</div><div class="a" style="left:96.9px;top:216.64999999999998px;width:43.86px;height:5.3px;background:repeating-linear-gradient(90deg,#363731 0 .85px,transparent .85px 8.593px)"></div><div class="code" style="top:217.02px">                        &lt;<span class="p">div</span> <span class="g">class</span>=<span class="y">"table-responsive"</span>&gt;</div><div class="ln" style="top:223.02px;color:#9c9c96">38</div><div class="a" style="left:96.9px;top:221.95px;width:52.46px;height:5.3px;background:repeating-linear-gradient(90deg,#363731 0 .85px,transparent .85px 8.593px)"></div><div class="code" style="top:223.02px">                            &lt;<span class="p">table</span> <span class="g">class</span>=<span class="y">"table table-bordered"</span>&gt;</div><div class="ln" style="top:228.02px;color:#9c9c96">39</div><div class="a" style="left:96.9px;top:227.25px;width:61.05px;height:5.3px;background:repeating-linear-gradient(90deg,#363731 0 .85px,transparent .85px 8.593px)"></div><div class="code" style="top:228.02px">                                &lt;<span class="p">thead</span>&gt;</div><div class="ln" style="top:233.02px;color:#9c9c96">40</div><div class="a" style="left:96.9px;top:232.54999999999998px;width:69.64px;height:5.3px;background:repeating-linear-gradient(90deg,#363731 0 .85px,transparent .85px 8.593px)"></div><div class="code" style="top:233.02px">                                    &lt;<span class="p">tr</span> <span class="g">class</span>=<span class="y">"text-center"</span>&gt;</div><div class="ln" style="top:238.02px;color:#9c9c96">41</div><div class="a" style="left:96.9px;top:237.85px;width:78.24px;height:5.3px;background:repeating-linear-gradient(90deg,#363731 0 .85px,transparent .85px 8.593px)"></div><div class="code" style="top:238.02px">                                        &lt;<span class="p">td</span> <span class="g">colspan</span>=<span class="y">"9"</span> <span class="g">style</span>=<span class="y">"background-color: blue; color: white;"</span>&gt;กลุ่มเครื่องจักร :</div><div class="ln" style="top:244.02px;color:#9c9c96">42</div><div class="a" style="left:96.9px;top:243.14999999999998px;width:86.83px;height:5.3px;background:repeating-linear-gradient(90deg,#363731 0 .85px,transparent .85px 8.593px)"></div><div class="code" style="top:244.02px">                                            <span class="p">&lt;?php</span> <span class="b">echo</span> $group<span class="k3">[</span><span class="y">'group_name'</span><span class="k3">]</span> <span class="p">?&gt;</span></div><div class="ln" style="top:249.02px;color:#9c9c96">43</div><div class="a" style="left:96.9px;top:248.45px;width:78.24px;height:5.3px;background:repeating-linear-gradient(90deg,#363731 0 .85px,transparent .85px 8.593px)"></div><div class="code" style="top:249.02px">                                        &lt;/<span class="p">td</span>&gt;</div><div class="ln" style="top:254.02px;color:#9c9c96">44</div><div class="a" style="left:96.9px;top:253.74999999999997px;width:69.64px;height:5.3px;background:repeating-linear-gradient(90deg,#363731 0 .85px,transparent .85px 8.593px)"></div><div class="code" style="top:254.02px">                                    &lt;/<span class="p">tr</span>&gt;</div><div class="ln" style="top:260.02px;color:#9c9c96">45</div><div class="a" style="left:96.9px;top:259.05px;width:69.64px;height:5.3px;background:repeating-linear-gradient(90deg,#363731 0 .85px,transparent .85px 8.593px)"></div><div class="code" style="top:260.02px">                                    &lt;<span class="p">tr</span> <span class="g">class</span>=<span class="y">"text-center"</span>&gt;</div><div class="ln" style="top:265.02px;color:#9c9c96">46</div><div class="a" style="left:96.9px;top:264.35px;width:78.24px;height:5.3px;background:repeating-linear-gradient(90deg,#363731 0 .85px,transparent .85px 8.593px)"></div><div class="code" style="top:265.02px">                                        &lt;<span class="p">td</span>&gt;รหัส&lt;/<span class="p">td</span>&gt;</div><div class="ln" style="top:270.02px;color:#9c9c96">47</div><div class="a" style="left:96.9px;top:269.65px;width:78.24px;height:5.3px;background:repeating-linear-gradient(90deg,#363731 0 .85px,transparent .85px 8.593px)"></div><div class="code" style="top:270.02px">                                        &lt;<span class="p">td</span>&gt;รายการตรวจเช็ค&lt;/<span class="p">td</span>&gt;</div><div class="ln" style="top:276.02px;color:#9c9c96">48</div><div class="a" style="left:96.9px;top:274.95000000000005px;width:78.24px;height:5.3px;background:repeating-linear-gradient(90deg,#363731 0 .85px,transparent .85px 8.593px)"></div><div class="code" style="top:276.02px">                                        &lt;<span class="p">td</span> <span class="g">colspan</span>=<span class="y">"4"</span>&gt;สถานะ&lt;/<span class="p">td</span>&gt;</div><div class="ln" style="top:281.02px;color:#9c9c96">49</div><div class="a" style="left:96.9px;top:280.25px;width:78.24px;height:5.3px;background:repeating-linear-gradient(90deg,#363731 0 .85px,transparent .85px 8.593px)"></div><div class="code" style="top:281.02px">                                        &lt;<span class="p">td</span>&gt;รายละเอียดการตรวจเช็ค&lt;/<span class="p">td</span>&gt;</div><div class="ln" style="top:286.02px;color:#9c9c96">50</div><div class="a" style="left:96.9px;top:285.55px;width:78.24px;height:5.3px;background:repeating-linear-gradient(90deg,#363731 0 .85px,transparent .85px 8.593px)"></div><div class="code" style="top:286.02px">                                        &lt;<span class="p">td</span>&gt;รูปภาพ&lt;/<span class="p">td</span>&gt;</div><div class="ln" style="top:291.02px;color:#9c9c96">51</div><div class="a" style="left:96.9px;top:290.85px;width:78.24px;height:5.3px;background:repeating-linear-gradient(90deg,#363731 0 .85px,transparent .85px 8.593px)"></div><div class="code" style="top:291.02px">                                        &lt;<span class="p">td</span>&gt;สถานะ&lt;/<span class="p">td</span>&gt;</div><div class="ln" style="top:297.02px;color:#9c9c96">52</div><div class="a" style="left:96.9px;top:296.15000000000003px;width:69.64px;height:5.3px;background:repeating-linear-gradient(90deg,#363731 0 .85px,transparent .85px 8.593px)"></div><div class="code" style="top:297.02px">                                    &lt;/<span class="p">tr</span>&gt;</div><div class="ln" style="top:302.02px;color:#9c9c96">53</div><div class="a" style="left:96.9px;top:301.45px;width:61.05px;height:5.3px;background:repeating-linear-gradient(90deg,#363731 0 .85px,transparent .85px 8.593px)"></div><div class="code" style="top:302.02px">                                &lt;/<span class="p">thead</span>&gt;</div><div class="ln" style="top:307.02px;color:#9c9c96">54</div><div class="a" style="left:96.9px;top:306.75px;width:61.05px;height:5.3px;background:repeating-linear-gradient(90deg,#363731 0 .85px,transparent .85px 8.593px)"></div><div class="code" style="top:307.02px">                                &lt;<span class="p">tbody</span>&gt;</div><div class="ln" style="top:313.02px;color:#9c9c96">55</div><div class="a" style="left:96.9px;top:312.05px;width:69.64px;height:5.3px;background:repeating-linear-gradient(90deg,#363731 0 .85px,transparent .85px 8.593px)"></div><div class="code" style="top:313.02px">                                    &lt;<span class="p">tr</span> <span class="g">class</span>=<span class="y">"text-center"</span>&gt;</div><div class="ln" style="top:318.02px;color:#9c9c96">56</div><div class="a" style="left:96.9px;top:317.35px;width:78.24px;height:5.3px;background:repeating-linear-gradient(90deg,#363731 0 .85px,transparent .85px 8.593px)"></div><div class="code" style="top:318.02px">                                        &lt;<span class="p">td</span> <span class="g">rowspan</span>=<span class="y">"4"</span>&gt;1234&lt;/<span class="p">td</span>&gt;</div><div class="ln" style="top:323.02px;color:#9c9c96">57</div><div class="a" style="left:96.9px;top:322.65000000000003px;width:69.64px;height:5.3px;background:repeating-linear-gradient(90deg,#363731 0 .85px,transparent .85px 8.593px)"></div><div class="code" style="top:323.02px">                                    &lt;/<span class="p">tr</span>&gt;</div><div class="ln" style="top:329.02px;color:#9c9c96">58</div><div class="a" style="left:96.9px;top:327.95px;width:69.64px;height:5.3px;background:repeating-linear-gradient(90deg,#363731 0 .85px,transparent .85px 8.593px)"></div><div class="code" style="top:329.02px">                                    &lt;<span class="p">tr</span>&gt;</div><div class="ln" style="top:334.02px;color:#9c9c96">59</div><div class="a" style="left:96.9px;top:333.25px;width:78.24px;height:5.3px;background:repeating-linear-gradient(90deg,#363731 0 .85px,transparent .85px 8.593px)"></div><div class="code" style="top:334.02px">                                        &lt;<span class="p">td</span>&gt;(1) Chain Conveyor&lt;/<span class="p">td</span>&gt;</div><div class="ln" style="top:339.02px;color:#9c9c96">60</div><div class="a" style="left:96.9px;top:338.55px;width:78.24px;height:5.3px;background:repeating-linear-gradient(90deg,#363731 0 .85px,transparent .85px 8.593px)"></div><div class="code" style="top:339.02px">                                        &lt;<span class="p">td</span> <span class="g">class</span>=<span class="y">"text-center p-1"</span>&gt;</div><div class="ln" style="top:344.02px;color:#9c9c96">61</div><div class="a" style="left:96.9px;top:343.85px;width:86.83px;height:5.3px;background:repeating-linear-gradient(90deg,#363731 0 .85px,transparent .85px 8.593px)"></div><div class="code" style="top:344.02px">                                            &lt;<span class="p">input</span> <span class="g">type</span>=<span class="y">"radio"</span> <span class="g">class</span>=<span class="y">"btn-check"</span> <span class="g">name</span>=<span class="y">"options-outlined"</span> <span class="g">id</span>=<span class="y">"success-outlined"</span> <span class="g">autocomplete</span>=<span class="y">"off"</span>&gt;</div><div class="ln" style="top:350.02px;color:#9c9c96">62</div><div class="a" style="left:96.9px;top:349.15000000000003px;width:86.83px;height:5.3px;background:repeating-linear-gradient(90deg,#363731 0 .85px,transparent .85px 8.593px)"></div><div class="code" style="top:350.02px">                                            &lt;<span class="p">label</span> <span class="g">class</span>=<span class="y">"btn btn-outline-success"</span> <span class="g">for</span>=<span class="y">"success-outlined"</span>&gt;ปกติ&lt;/<span class="p">label</span>&gt;</div><div class="ln" style="top:355.02px;color:#9c9c96">63</div><div class="a" style="left:96.9px;top:354.45px;width:78.24px;height:5.3px;background:repeating-linear-gradient(90deg,#363731 0 .85px,transparent .85px 8.593px)"></div><div class="code" style="top:355.02px">                                        &lt;/<span class="p">td</span>&gt;</div><div class="ln" style="top:360.02px;color:#9c9c96">64</div><div class="a" style="left:96.9px;top:359.75px;width:78.24px;height:5.3px;background:repeating-linear-gradient(90deg,#363731 0 .85px,transparent .85px 8.593px)"></div><div class="code" style="top:360.02px">                                        &lt;<span class="p">td</span> <span class="g">class</span>=<span class="y">"text-center p-1"</span>&gt;</div><div class="ln" style="top:366.02px;color:#9c9c96">65</div><div class="a" style="left:96.9px;top:365.05px;width:86.83px;height:5.3px;background:repeating-linear-gradient(90deg,#363731 0 .85px,transparent .85px 8.593px)"></div><div class="code" style="top:366.02px">                                            &lt;<span class="p">input</span> <span class="g">type</span>=<span class="y">"radio"</span> <span class="g">class</span>=<span class="y">"btn-check"</span> <span class="g">name</span>=<span class="y">"options-outlined"</span> <span class="g">id</span>=<span class="y">"warning-outlined"</span> <span class="g">autocomplete</span>=<span class="y">"off"</span>&gt;</div><div class="ln" style="top:371.02px;color:#9c9c96">66</div><div class="a" style="left:96.9px;top:370.35px;width:86.83px;height:5.3px;background:repeating-linear-gradient(90deg,#363731 0 .85px,transparent .85px 8.593px)"></div><div class="code" style="top:371.02px">                                            &lt;<span class="p">label</span> <span class="g">class</span>=<span class="y">"btn btn-outline-warning"</span> <span class="g">for</span>=<span class="y">"warning-outlined"</span>&gt;ผิดปกติ&lt;/<span class="p">label</span>&gt;</div><div class="ln" style="top:376.02px;color:#9c9c96">67</div><div class="a" style="left:96.9px;top:375.65000000000003px;width:78.24px;height:5.3px;background:repeating-linear-gradient(90deg,#363731 0 .85px,transparent .85px 8.593px)"></div><div class="code" style="top:376.02px">                                        &lt;/<span class="p">td</span>&gt;</div><div class="ln" style="top:382.02px;color:#9c9c96">68</div><div class="a" style="left:96.9px;top:380.95px;width:78.24px;height:5.3px;background:repeating-linear-gradient(90deg,#363731 0 .85px,transparent .85px 8.593px)"></div><div class="code" style="top:382.02px">                                        &lt;<span class="p">td</span> <span class="g">class</span>=<span class="y">"text-center p-1"</span>&gt;</div><div class="a" style="left:444.4px;top:24.8px;width:1.3px;height:.7px;background:#6a2a42"></div><div class="a" style="left:446.0px;top:24.8px;width:29.6px;height:.7px;background:#55606a;opacity:0.53"></div><div class="a" style="left:444.9px;top:25.8px;width:1.3px;height:.7px;background:#6a2a42"></div><div class="a" style="left:446.5px;top:25.8px;width:29.1px;height:.7px;background:#55606a;opacity:0.57"></div><div class="a" style="left:445.9px;top:28.8px;width:1.3px;height:.7px;background:#6a2a42"></div><div class="a" style="left:447.5px;top:28.8px;width:3.4px;height:.7px;background:#6a6a60;opacity:0.69"></div><div class="a" style="left:446.4px;top:29.8px;width:1.3px;height:.7px;background:#6a2a42"></div><div class="a" style="left:448.0px;top:29.8px;width:8.4px;height:.7px;background:#6a6a60;opacity:0.36"></div><div class="a" style="left:445.7px;top:31.8px;width:1.3px;height:.7px;background:#6a2a42"></div><div class="a" style="left:447.3px;top:31.8px;width:3.4px;height:.7px;background:#55606a;opacity:0.46"></div><div class="a" style="left:446.5px;top:32.8px;width:1.3px;height:.7px;background:#6a2a42"></div><div class="a" style="left:448.1px;top:32.8px;width:10.4px;height:.7px;background:#7a7046;opacity:0.45"></div><div class="a" style="left:448.0px;top:34.8px;width:1.3px;height:.7px;background:#6a2a42"></div><div class="a" style="left:449.6px;top:34.8px;width:26.0px;height:.7px;background:#6b6c48;opacity:0.60"></div><div class="a" style="left:448.3px;top:35.8px;width:1.3px;height:.7px;background:#6a2a42"></div><div class="a" style="left:449.9px;top:35.8px;width:12.4px;height:.7px;background:#6b6c48;opacity:0.37"></div><div class="a" style="left:449.7px;top:36.8px;width:1.3px;height:.7px;background:#6a2a42"></div><div class="a" style="left:451.3px;top:36.8px;width:12.4px;height:.7px;background:#55606a;opacity:0.37"></div><div class="a" style="left:449.5px;top:37.8px;width:1.3px;height:.7px;background:#6a2a42"></div><div class="a" style="left:451.1px;top:37.8px;width:10.4px;height:.7px;background:#5f6a3a;opacity:0.67"></div><div class="a" style="left:450.6px;top:38.8px;width:1.3px;height:.7px;background:#6a2a42"></div><div class="a" style="left:452.2px;top:38.8px;width:20.4px;height:.7px;background:#55606a;opacity:0.38"></div><div class="a" style="left:452.4px;top:39.8px;width:1.3px;height:.7px;background:#6a2a42"></div><div class="a" style="left:454.0px;top:39.8px;width:12.4px;height:.7px;background:#74704a;opacity:0.38"></div><div class="a" style="left:451.4px;top:40.8px;width:1.3px;height:.7px;background:#6a2a42"></div><div class="a" style="left:453.0px;top:40.8px;width:6.4px;height:.7px;background:#5f6a3a;opacity:0.44"></div><div class="a" style="left:450.1px;top:42.8px;width:1.3px;height:.7px;background:#6a2a42"></div><div class="a" style="left:451.7px;top:42.8px;width:23.9px;height:.7px;background:#5f6a3a;opacity:0.51"></div><div class="a" style="left:448.2px;top:43.8px;width:1.3px;height:.7px;background:#6a2a42"></div><div class="a" style="left:449.8px;top:43.8px;width:8.4px;height:.7px;background:#55606a;opacity:0.58"></div><div class="a" style="left:448.5px;top:44.8px;width:1.3px;height:.7px;background:#6a2a42"></div><div class="a" style="left:450.1px;top:44.8px;width:10.4px;height:.7px;background:#6b6c48;opacity:0.44"></div><div class="a" style="left:450.7px;top:45.8px;width:1.3px;height:.7px;background:#6a2a42"></div><div class="a" style="left:452.3px;top:45.8px;width:12.4px;height:.7px;background:#6b6c48;opacity:0.42"></div><div class="a" style="left:450.6px;top:46.8px;width:1.3px;height:.7px;background:#6a2a42"></div><div class="a" style="left:452.2px;top:46.8px;width:6.4px;height:.7px;background:#6b6c48;opacity:0.70"></div><div class="a" style="left:451.2px;top:47.8px;width:1.3px;height:.7px;background:#6a2a42"></div><div class="a" style="left:452.8px;top:47.8px;width:16.4px;height:.7px;background:#74704a;opacity:0.49"></div><div class="a" style="left:451.8px;top:48.8px;width:1.3px;height:.7px;background:#6a2a42"></div><div class="a" style="left:453.4px;top:48.8px;width:10.4px;height:.7px;background:#6b6c48;opacity:0.56"></div><div class="a" style="left:453.1px;top:49.8px;width:1.3px;height:.7px;background:#6a2a42"></div><div class="a" style="left:454.7px;top:49.8px;width:20.9px;height:.7px;background:#6a6a60;opacity:0.40"></div><div class="a" style="left:453.7px;top:50.8px;width:1.3px;height:.7px;background:#6a2a42"></div><div class="a" style="left:455.3px;top:50.8px;width:12.4px;height:.7px;background:#5f6a3a;opacity:0.64"></div><div class="a" style="left:454.0px;top:51.8px;width:1.3px;height:.7px;background:#6a2a42"></div><div class="a" style="left:455.6px;top:51.8px;width:20.0px;height:.7px;background:#5f6a3a;opacity:0.59"></div><div class="a" style="left:454.7px;top:52.8px;width:1.3px;height:.7px;background:#6a2a42"></div><div class="a" style="left:456.3px;top:52.8px;width:6.4px;height:.7px;background:#55606a;opacity:0.37"></div><div class="a" style="left:454.8px;top:53.8px;width:1.3px;height:.7px;background:#6a2a42"></div><div class="a" style="left:456.4px;top:53.8px;width:12.4px;height:.7px;background:#5f6a3a;opacity:0.61"></div><div class="a" style="left:455.7px;top:54.8px;width:1.3px;height:.7px;background:#6a2a42"></div><div class="a" style="left:457.3px;top:54.8px;width:18.3px;height:.7px;background:#74704a;opacity:0.53"></div><div class="a" style="left:456.6px;top:55.8px;width:1.3px;height:.7px;background:#6a2a42"></div><div class="a" style="left:458.2px;top:55.8px;width:8.4px;height:.7px;background:#5f6a3a;opacity:0.52"></div><div class="a" style="left:456.3px;top:56.8px;width:1.3px;height:.7px;background:#6a2a42"></div><div class="a" style="left:457.9px;top:56.8px;width:6.4px;height:.7px;background:#74704a;opacity:0.42"></div><div class="a" style="left:456.7px;top:57.8px;width:1.3px;height:.7px;background:#6a2a42"></div><div class="a" style="left:458.3px;top:57.8px;width:6.4px;height:.7px;background:#74704a;opacity:0.49"></div><div class="a" style="left:455.9px;top:59.8px;width:1.3px;height:.7px;background:#6a2a42"></div><div class="a" style="left:457.5px;top:59.8px;width:8.4px;height:.7px;background:#6b6c48;opacity:0.48"></div><div class="a" style="left:456.8px;top:60.8px;width:1.3px;height:.7px;background:#6a2a42"></div><div class="a" style="left:458.4px;top:60.8px;width:17.2px;height:.7px;background:#6a6a60;opacity:0.68"></div><div class="a" style="left:456.4px;top:61.8px;width:1.3px;height:.7px;background:#6a2a42"></div><div class="a" style="left:458.0px;top:61.8px;width:17.6px;height:.7px;background:#74704a;opacity:0.60"></div><div class="a" style="left:456.6px;top:63.8px;width:1.3px;height:.7px;background:#6a2a42"></div><div class="a" style="left:458.2px;top:63.8px;width:12.4px;height:.7px;background:#74704a;opacity:0.40"></div><div class="a" style="left:455.8px;top:64.8px;width:1.3px;height:.7px;background:#6a2a42"></div><div class="a" style="left:457.4px;top:64.8px;width:16.4px;height:.7px;background:#7a7046;opacity:0.37"></div><div class="a" style="left:457.2px;top:65.8px;width:1.3px;height:.7px;background:#6a2a42"></div><div class="a" style="left:458.8px;top:65.8px;width:8.4px;height:.7px;background:#74704a;opacity:0.47"></div><div class="a" style="left:456.9px;top:66.8px;width:1.3px;height:.7px;background:#6a2a42"></div><div class="a" style="left:458.5px;top:66.8px;width:17.1px;height:.7px;background:#6b6c48;opacity:0.65"></div><div class="a" style="left:456.8px;top:67.8px;width:1.3px;height:.7px;background:#6a2a42"></div><div class="a" style="left:458.4px;top:67.8px;width:17.2px;height:.7px;background:#55606a;opacity:0.55"></div><div class="a" style="left:457.0px;top:69.8px;width:1.3px;height:.7px;background:#6a2a42"></div><div class="a" style="left:458.6px;top:69.8px;width:17.0px;height:.7px;background:#7a7046;opacity:0.47"></div><div class="a" style="left:457.5px;top:70.8px;width:1.3px;height:.7px;background:#6a2a42"></div><div class="a" style="left:459.1px;top:70.8px;width:16.5px;height:.7px;background:#55606a;opacity:0.51"></div><div class="a" style="left:457.0px;top:71.8px;width:1.3px;height:.7px;background:#6a2a42"></div><div class="a" style="left:458.6px;top:71.8px;width:17.0px;height:.7px;background:#6b6c48;opacity:0.46"></div><div class="a" style="left:459.1px;top:74.8px;width:1.3px;height:.7px;background:#6a2a42"></div><div class="a" style="left:460.7px;top:74.8px;width:14.9px;height:.7px;background:#74704a;opacity:0.66"></div><div class="a" style="left:460.2px;top:76.8px;width:1.3px;height:.7px;background:#6a2a42"></div><div class="a" style="left:461.8px;top:76.8px;width:13.8px;height:.7px;background:#7a7046;opacity:0.68"></div><div class="a" style="left:460.6px;top:77.8px;width:1.3px;height:.7px;background:#6a2a42"></div><div class="a" style="left:462.2px;top:77.8px;width:13.4px;height:.7px;background:#7a7046;opacity:0.44"></div><div class="a" style="left:461.5px;top:78.8px;width:1.3px;height:.7px;background:#6a2a42"></div><div class="a" style="left:463.1px;top:78.8px;width:10.4px;height:.7px;background:#5f6a3a;opacity:0.48"></div><div class="a" style="left:462.1px;top:79.8px;width:1.3px;height:.7px;background:#6a2a42"></div><div class="a" style="left:463.7px;top:79.8px;width:8.4px;height:.7px;background:#5f6a3a;opacity:0.52"></div><div class="a" style="left:463.2px;top:80.8px;width:1.3px;height:.7px;background:#6a2a42"></div><div class="a" style="left:464.8px;top:80.8px;width:6.4px;height:.7px;background:#74704a;opacity:0.64"></div><div class="a" style="left:462.7px;top:81.8px;width:1.3px;height:.7px;background:#6a2a42"></div><div class="a" style="left:464.3px;top:81.8px;width:10.4px;height:.7px;background:#55606a;opacity:0.48"></div><div class="a" style="left:463.7px;top:82.8px;width:1.3px;height:.7px;background:#6a2a42"></div><div class="a" style="left:465.3px;top:82.8px;width:10.3px;height:.7px;background:#74704a;opacity:0.38"></div><div class="a" style="left:463.3px;top:83.8px;width:1.3px;height:.7px;background:#6a2a42"></div><div class="a" style="left:464.9px;top:83.8px;width:3.4px;height:.7px;background:#7a7046;opacity:0.60"></div><div class="a" style="left:464.4px;top:84.8px;width:1.3px;height:.7px;background:#6a2a42"></div><div class="a" style="left:466.0px;top:84.8px;width:3.4px;height:.7px;background:#7a7046;opacity:0.40"></div><div class="a" style="left:465.4px;top:86.8px;width:1.3px;height:.7px;background:#6a2a42"></div><div class="a" style="left:467.0px;top:86.8px;width:8.4px;height:.7px;background:#6b6c48;opacity:0.69"></div><div class="a" style="left:465.9px;top:88.8px;width:1.3px;height:.7px;background:#6a2a42"></div><div class="a" style="left:467.5px;top:88.8px;width:8.1px;height:.7px;background:#6b6c48;opacity:0.59"></div><div class="a" style="left:465.9px;top:89.8px;width:1.3px;height:.7px;background:#6a2a42"></div><div class="a" style="left:467.5px;top:89.8px;width:8.1px;height:.7px;background:#7a7046;opacity:0.35"></div><div class="a" style="left:466.8px;top:90.8px;width:1.3px;height:.7px;background:#6a2a42"></div><div class="a" style="left:468.4px;top:90.8px;width:7.2px;height:.7px;background:#5f6a3a;opacity:0.45"></div><div class="a" style="left:466.2px;top:91.8px;width:1.3px;height:.7px;background:#6a2a42"></div><div class="a" style="left:467.8px;top:91.8px;width:7.8px;height:.7px;background:#6a6a60;opacity:0.57"></div><div class="a" style="left:466.2px;top:92.8px;width:1.3px;height:.7px;background:#6a2a42"></div><div class="a" style="left:467.8px;top:92.8px;width:7.8px;height:.7px;background:#6b6c48;opacity:0.49"></div><div class="a" style="left:465.8px;top:93.8px;width:1.3px;height:.7px;background:#6a2a42"></div><div class="a" style="left:467.4px;top:93.8px;width:8.2px;height:.7px;background:#55606a;opacity:0.42"></div><div class="a" style="left:463.7px;top:95.8px;width:1.3px;height:.7px;background:#6a2a42"></div><div class="a" style="left:465.3px;top:95.8px;width:10.3px;height:.7px;background:#74704a;opacity:0.51"></div><div class="a" style="left:462.9px;top:96.8px;width:1.3px;height:.7px;background:#6a2a42"></div><div class="a" style="left:464.5px;top:96.8px;width:6.4px;height:.7px;background:#5f6a3a;opacity:0.43"></div><div class="a" style="left:460.4px;top:98.8px;width:1.3px;height:.7px;background:#6a2a42"></div><div class="a" style="left:462.0px;top:98.8px;width:13.6px;height:.7px;background:#74704a;opacity:0.67"></div><div class="a" style="left:460.2px;top:99.8px;width:1.3px;height:.7px;background:#6a2a42"></div><div class="a" style="left:461.8px;top:99.8px;width:6.4px;height:.7px;background:#6b6c48;opacity:0.50"></div><div class="a" style="left:458.9px;top:100.8px;width:1.3px;height:.7px;background:#6a2a42"></div><div class="a" style="left:460.5px;top:100.8px;width:15.1px;height:.7px;background:#6b6c48;opacity:0.43"></div><div class="a" style="left:458.5px;top:101.8px;width:1.3px;height:.7px;background:#6a2a42"></div><div class="a" style="left:460.1px;top:101.8px;width:3.4px;height:.7px;background:#5f6a3a;opacity:0.54"></div><div class="a" style="left:457.4px;top:102.8px;width:1.3px;height:.7px;background:#6a2a42"></div><div class="a" style="left:459.0px;top:102.8px;width:16.6px;height:.7px;background:#5f6a3a;opacity:0.70"></div><div class="a" style="left:458.5px;top:103.8px;width:1.3px;height:.7px;background:#6a2a42"></div><div class="a" style="left:460.1px;top:103.8px;width:15.5px;height:.7px;background:#55606a;opacity:0.55"></div><div class="a" style="left:459.3px;top:104.8px;width:1.3px;height:.7px;background:#6a2a42"></div><div class="a" style="left:460.9px;top:104.8px;width:14.7px;height:.7px;background:#6a6a60;opacity:0.55"></div><div class="a" style="left:460.7px;top:105.8px;width:1.3px;height:.7px;background:#6a2a42"></div><div class="a" style="left:462.3px;top:105.8px;width:8.4px;height:.7px;background:#6a6a60;opacity:0.53"></div><div class="a" style="left:460.7px;top:106.8px;width:1.3px;height:.7px;background:#6a2a42"></div><div class="a" style="left:462.3px;top:106.8px;width:13.3px;height:.7px;background:#6a6a60;opacity:0.42"></div><div class="a" style="left:460.1px;top:107.8px;width:1.3px;height:.7px;background:#6a2a42"></div><div class="a" style="left:461.7px;top:107.8px;width:13.9px;height:.7px;background:#74704a;opacity:0.55"></div><div class="a" style="left:458.6px;top:108.8px;width:1.3px;height:.7px;background:#6a2a42"></div><div class="a" style="left:460.2px;top:108.8px;width:15.4px;height:.7px;background:#6b6c48;opacity:0.56"></div><div class="a" style="left:457.8px;top:109.8px;width:1.3px;height:.7px;background:#6a2a42"></div><div class="a" style="left:459.4px;top:109.8px;width:16.2px;height:.7px;background:#55606a;opacity:0.54"></div><div class="a" style="left:458.7px;top:111.8px;width:1.3px;height:.7px;background:#6a2a42"></div><div class="a" style="left:460.3px;top:111.8px;width:15.3px;height:.7px;background:#55606a;opacity:0.49"></div><div class="a" style="left:460.5px;top:112.8px;width:1.3px;height:.7px;background:#6a2a42"></div><div class="a" style="left:462.1px;top:112.8px;width:12.4px;height:.7px;background:#5f6a3a;opacity:0.52"></div><div class="a" style="left:459.8px;top:113.8px;width:1.3px;height:.7px;background:#6a2a42"></div><div class="a" style="left:461.4px;top:113.8px;width:14.2px;height:.7px;background:#6a6a60;opacity:0.46"></div><div class="a" style="left:460.4px;top:114.8px;width:1.3px;height:.7px;background:#6a2a42"></div><div class="a" style="left:462.0px;top:114.8px;width:12.4px;height:.7px;background:#5f6a3a;opacity:0.60"></div><div class="a" style="left:462.0px;top:117.8px;width:1.3px;height:.7px;background:#6a2a42"></div><div class="a" style="left:463.6px;top:117.8px;width:10.4px;height:.7px;background:#6a6a60;opacity:0.52"></div><div class="a" style="left:462.8px;top:118.8px;width:1.3px;height:.7px;background:#6a2a42"></div><div class="a" style="left:464.4px;top:118.8px;width:11.2px;height:.7px;background:#6a6a60;opacity:0.44"></div><div class="a" style="left:462.9px;top:119.8px;width:1.3px;height:.7px;background:#6a2a42"></div><div class="a" style="left:464.5px;top:119.8px;width:11.1px;height:.7px;background:#6b6c48;opacity:0.48"></div><div class="a" style="left:463.7px;top:120.8px;width:1.3px;height:.7px;background:#6a2a42"></div><div class="a" style="left:465.3px;top:120.8px;width:8.4px;height:.7px;background:#6a6a60;opacity:0.42"></div><div class="a" style="left:464.5px;top:121.8px;width:1.3px;height:.7px;background:#6a2a42"></div><div class="a" style="left:466.1px;top:121.8px;width:9.5px;height:.7px;background:#5f6a3a;opacity:0.65"></div><div class="a" style="left:464.6px;top:122.8px;width:1.3px;height:.7px;background:#6a2a42"></div><div class="a" style="left:466.2px;top:122.8px;width:9.4px;height:.7px;background:#7a7046;opacity:0.57"></div><div class="a" style="left:464.2px;top:123.8px;width:1.3px;height:.7px;background:#6a2a42"></div><div class="a" style="left:465.8px;top:123.8px;width:9.8px;height:.7px;background:#5f6a3a;opacity:0.43"></div><div class="a" style="left:465.2px;top:124.8px;width:1.3px;height:.7px;background:#6a2a42"></div><div class="a" style="left:466.8px;top:124.8px;width:8.4px;height:.7px;background:#5f6a3a;opacity:0.40"></div><div class="a" style="left:463.8px;top:125.8px;width:1.3px;height:.7px;background:#6a2a42"></div><div class="a" style="left:465.4px;top:125.8px;width:10.2px;height:.7px;background:#55606a;opacity:0.54"></div><div class="a" style="left:464.0px;top:126.8px;width:1.3px;height:.7px;background:#6a2a42"></div><div class="a" style="left:465.6px;top:126.8px;width:3.4px;height:.7px;background:#6b6c48;opacity:0.42"></div><div class="a" style="left:462.9px;top:127.8px;width:1.3px;height:.7px;background:#6a2a42"></div><div class="a" style="left:464.5px;top:127.8px;width:11.1px;height:.7px;background:#6b6c48;opacity:0.60"></div><div class="a" style="left:461.9px;top:128.8px;width:1.3px;height:.7px;background:#6a2a42"></div><div class="a" style="left:463.5px;top:128.8px;width:10.4px;height:.7px;background:#6b6c48;opacity:0.52"></div><div class="a" style="left:459.9px;top:129.8px;width:1.3px;height:.7px;background:#6a2a42"></div><div class="a" style="left:461.5px;top:129.8px;width:14.1px;height:.7px;background:#6a6a60;opacity:0.52"></div><div class="a" style="left:457.5px;top:132.8px;width:1.3px;height:.7px;background:#6a2a42"></div><div class="a" style="left:459.1px;top:132.8px;width:3.4px;height:.7px;background:#5f6a3a;opacity:0.68"></div><div class="a" style="left:456.8px;top:133.8px;width:1.3px;height:.7px;background:#6a2a42"></div><div class="a" style="left:458.4px;top:133.8px;width:16.4px;height:.7px;background:#55606a;opacity:0.51"></div><div class="a" style="left:456.0px;top:134.8px;width:1.3px;height:.7px;background:#6a2a42"></div><div class="a" style="left:457.6px;top:134.8px;width:16.4px;height:.7px;background:#6b6c48;opacity:0.57"></div><div class="a" style="left:455.1px;top:135.8px;width:1.3px;height:.7px;background:#6a2a42"></div><div class="a" style="left:456.7px;top:135.8px;width:18.9px;height:.7px;background:#55606a;opacity:0.48"></div><div class="a" style="left:455.6px;top:136.8px;width:1.3px;height:.7px;background:#6a2a42"></div><div class="a" style="left:457.2px;top:136.8px;width:8.4px;height:.7px;background:#6b6c48;opacity:0.53"></div><div class="a" style="left:455.0px;top:137.8px;width:1.3px;height:.7px;background:#6a2a42"></div><div class="a" style="left:456.6px;top:137.8px;width:19.0px;height:.7px;background:#6a6a60;opacity:0.56"></div><div class="a" style="left:455.8px;top:138.8px;width:1.3px;height:.7px;background:#6a2a42"></div><div class="a" style="left:457.4px;top:138.8px;width:12.4px;height:.7px;background:#74704a;opacity:0.67"></div><div class="a" style="left:456.1px;top:139.8px;width:1.3px;height:.7px;background:#6a2a42"></div><div class="a" style="left:457.7px;top:139.8px;width:17.9px;height:.7px;background:#5f6a3a;opacity:0.66"></div><div class="a" style="left:456.3px;top:140.8px;width:1.3px;height:.7px;background:#6a2a42"></div><div class="a" style="left:457.9px;top:140.8px;width:17.7px;height:.7px;background:#5f6a3a;opacity:0.49"></div><div class="a" style="left:455.5px;top:142.8px;width:1.3px;height:.7px;background:#6a2a42"></div><div class="a" style="left:457.1px;top:142.8px;width:3.4px;height:.7px;background:#74704a;opacity:0.70"></div><div class="a" style="left:455.4px;top:144.8px;width:1.3px;height:.7px;background:#6a2a42"></div><div class="a" style="left:457.0px;top:144.8px;width:12.4px;height:.7px;background:#74704a;opacity:0.43"></div><div class="a" style="left:455.6px;top:145.8px;width:1.3px;height:.7px;background:#6a2a42"></div><div class="a" style="left:457.2px;top:145.8px;width:6.4px;height:.7px;background:#55606a;opacity:0.53"></div><div class="a" style="left:455.7px;top:146.8px;width:1.3px;height:.7px;background:#6a2a42"></div><div class="a" style="left:457.3px;top:146.8px;width:6.4px;height:.7px;background:#55606a;opacity:0.69"></div><div class="a" style="left:455.0px;top:147.8px;width:1.3px;height:.7px;background:#6a2a42"></div><div class="a" style="left:456.6px;top:147.8px;width:10.4px;height:.7px;background:#74704a;opacity:0.51"></div><div class="a" style="left:455.8px;top:148.8px;width:1.3px;height:.7px;background:#6a2a42"></div><div class="a" style="left:457.4px;top:148.8px;width:18.2px;height:.7px;background:#6b6c48;opacity:0.38"></div><div class="a" style="left:455.4px;top:149.8px;width:1.3px;height:.7px;background:#6a2a42"></div><div class="a" style="left:457.0px;top:149.8px;width:18.6px;height:.7px;background:#6a6a60;opacity:0.53"></div><div class="a" style="left:456.5px;top:150.8px;width:1.3px;height:.7px;background:#6a2a42"></div><div class="a" style="left:458.1px;top:150.8px;width:6.4px;height:.7px;background:#7a7046;opacity:0.51"></div><div class="a" style="left:456.0px;top:151.8px;width:1.3px;height:.7px;background:#6a2a42"></div><div class="a" style="left:457.6px;top:151.8px;width:3.4px;height:.7px;background:#55606a;opacity:0.68"></div><div class="a" style="left:455.2px;top:152.8px;width:1.3px;height:.7px;background:#6a2a42"></div><div class="a" style="left:456.8px;top:152.8px;width:8.4px;height:.7px;background:#55606a;opacity:0.54"></div><div class="a" style="left:455.9px;top:153.8px;width:1.3px;height:.7px;background:#6a2a42"></div><div class="a" style="left:457.5px;top:153.8px;width:18.1px;height:.7px;background:#55606a;opacity:0.45"></div><div class="a" style="left:455.6px;top:154.8px;width:1.3px;height:.7px;background:#6a2a42"></div><div class="a" style="left:457.2px;top:154.8px;width:18.4px;height:.7px;background:#74704a;opacity:0.52"></div><div class="a" style="left:455.4px;top:155.8px;width:1.3px;height:.7px;background:#6a2a42"></div><div class="a" style="left:457.0px;top:155.8px;width:12.4px;height:.7px;background:#6b6c48;opacity:0.35"></div><div class="a" style="left:455.2px;top:157.8px;width:1.3px;height:.7px;background:#6a2a42"></div><div class="a" style="left:456.8px;top:157.8px;width:18.8px;height:.7px;background:#6b6c48;opacity:0.66"></div><div class="a" style="left:456.5px;top:159.8px;width:1.3px;height:.7px;background:#6a2a42"></div><div class="a" style="left:458.1px;top:159.8px;width:6.4px;height:.7px;background:#5f6a3a;opacity:0.50"></div><div class="a" style="left:455.7px;top:160.8px;width:1.3px;height:.7px;background:#6a2a42"></div><div class="a" style="left:457.3px;top:160.8px;width:10.4px;height:.7px;background:#6b6c48;opacity:0.53"></div><div class="a" style="left:456.4px;top:161.8px;width:1.3px;height:.7px;background:#6a2a42"></div><div class="a" style="left:458.0px;top:161.8px;width:17.6px;height:.7px;background:#5f6a3a;opacity:0.69"></div><div class="a" style="left:456.2px;top:162.8px;width:1.3px;height:.7px;background:#6a2a42"></div><div class="a" style="left:457.8px;top:162.8px;width:6.4px;height:.7px;background:#6b6c48;opacity:0.57"></div><div class="a" style="left:455.7px;top:163.8px;width:1.3px;height:.7px;background:#6a2a42"></div><div class="a" style="left:457.3px;top:163.8px;width:3.4px;height:.7px;background:#74704a;opacity:0.53"></div><div class="a" style="left:455.2px;top:164.8px;width:1.3px;height:.7px;background:#6a2a42"></div><div class="a" style="left:456.8px;top:164.8px;width:18.8px;height:.7px;background:#55606a;opacity:0.56"></div><div class="a" style="left:455.1px;top:165.8px;width:1.3px;height:.7px;background:#6a2a42"></div><div class="a" style="left:456.7px;top:165.8px;width:16.4px;height:.7px;background:#7a7046;opacity:0.54"></div><div class="a" style="left:454.6px;top:166.8px;width:1.3px;height:.7px;background:#6a2a42"></div><div class="a" style="left:456.2px;top:166.8px;width:8.4px;height:.7px;background:#5f6a3a;opacity:0.52"></div><div class="a" style="left:452.8px;top:167.8px;width:1.3px;height:.7px;background:#6a2a42"></div><div class="a" style="left:454.4px;top:167.8px;width:21.2px;height:.7px;background:#6a6a60;opacity:0.65"></div><div class="a" style="left:451.4px;top:168.8px;width:1.3px;height:.7px;background:#6a2a42"></div><div class="a" style="left:453.0px;top:168.8px;width:10.4px;height:.7px;background:#7a7046;opacity:0.45"></div><div class="a" style="left:450.3px;top:169.8px;width:1.3px;height:.7px;background:#6a2a42"></div><div class="a" style="left:451.9px;top:169.8px;width:23.7px;height:.7px;background:#7a7046;opacity:0.67"></div><div class="a" style="left:448.3px;top:171.8px;width:1.3px;height:.7px;background:#6a2a42"></div><div class="a" style="left:449.9px;top:171.8px;width:20.4px;height:.7px;background:#6b6c48;opacity:0.57"></div><div class="a" style="left:447.5px;top:172.8px;width:1.3px;height:.7px;background:#6a2a42"></div><div class="a" style="left:449.1px;top:172.8px;width:6.4px;height:.7px;background:#6b6c48;opacity:0.67"></div><div class="a" style="left:446.8px;top:173.8px;width:1.3px;height:.7px;background:#6a2a42"></div><div class="a" style="left:448.4px;top:173.8px;width:16.4px;height:.7px;background:#55606a;opacity:0.52"></div><div class="a" style="left:446.0px;top:174.8px;width:1.3px;height:.7px;background:#6a2a42"></div><div class="a" style="left:447.6px;top:174.8px;width:8.4px;height:.7px;background:#6b6c48;opacity:0.63"></div><div class="a" style="left:445.5px;top:175.8px;width:1.3px;height:.7px;background:#6a2a42"></div><div class="a" style="left:447.1px;top:175.8px;width:10.4px;height:.7px;background:#55606a;opacity:0.50"></div><div class="a" style="left:464.5px;top:123.6px;width:5px;height:1.2px;background:#d8d8d0;opacity:.75"></div><div class="a" style="left:464.5px;top:127.8px;width:6px;height:1.2px;background:#d8d8d0;opacity:.7"></div><div class="a" style="left:476px;top:19px;width:.35px;height:363px;background:#3a3b35"></div><div class="a" style="left:476.3px;top:50.5px;width:2.7px;height:1.3px;background:#8c8c86"></div><div class="a" style="left:0;top:382.2px;width:479px;height:5.5px;background:#414339"></div><div class="a" style="left:0;top:382.2px;width:8.8px;height:5.5px;background:#c4742a"></div><svg style="left:3px;top:383.5px" width="3" height="3" viewBox="0 0 30 30"><path d="M4 12l8-8M12 4v8H4M26 18l-8 8M18 26v-8h8" fill="none" stroke="#fff" stroke-width="3"/></svg><div class="a" style="left:12.8px;top:383.7px;width:2.6px;height:2.6px;border-radius:50%;border:.4px solid #e8e8e2"></div><div class="t" style="left:16.20px;top:384.02px;font-size:3.1px;color:#e8e8e2;">0</div><svg style="left:19.6px;top:383.6px" width="3" height="2.8" viewBox="0 0 30 28"><path d="M15 3l12 22H3z" fill="none" stroke="#e8e8e2" stroke-width="3.4" stroke-linejoin="round"/></svg><div class="t" style="left:23.20px;top:384.02px;font-size:3.1px;color:#e8e8e2;">0</div><svg style="left:29.4px;top:383.5px" width="3.2" height="3" viewBox="0 0 32 30"><path d="M6 28L4 4q10 6 14 2t10 2l-2 12q-6-4-10 0t-11-1" fill="none" stroke="#e8e8e2" stroke-width="3.2"/></svg><div class="t" style="left:33.60px;top:384.02px;font-size:3.1px;color:#e8e8e2;">0</div><div class="t" style="left:352.00px;top:384.02px;font-size:3.1px;color:#e8e8e2;letter-spacing:0.045px;">Ln 26, Col 125</div><div class="t" style="left:377.00px;top:384.02px;font-size:3.1px;color:#e8e8e2;letter-spacing:0.026px;">Spaces: 4</div><div class="t" style="left:395.00px;top:384.02px;font-size:3.1px;color:#e8e8e2;letter-spacing:0.147px;">UTF-8</div><div class="t" style="left:408.60px;top:384.02px;font-size:3.1px;color:#e8e8e2;letter-spacing:-0.023px;">CRLF</div><div class="t" style="left:420.20px;top:384.02px;font-size:3.1px;color:#e8e8e2;letter-spacing:0.075px;">PHP</div><div class="t" style="left:435.00px;top:384.02px;font-size:3.1px;color:#e8e8e2;letter-spacing:0.190px;">Go Live</div><div class="t" style="left:455.00px;top:384.02px;font-size:3.1px;color:#e8e8e2;letter-spacing:0.289px;">Prettier</div><div class="a" style="left:430px;top:383.6px;width:2.8px;height:2.8px;border-radius:50%;border:.4px solid #e8e8e2"></div><div class="a" style="left:431px;top:384.6px;width:.8px;height:.8px;border-radius:50%;background:#e8e8e2"></div><div class="a" style="left:450.2px;top:383.6px;width:2.8px;height:2.8px;border-radius:50%;border:.4px solid #e8e8e2"></div><div class="a" style="left:451.5px;top:383.7px;width:.4px;height:2.6px;background:#e8e8e2;transform:rotate(45deg)"></div><svg style="left:471.6px;top:383.4px" width="2.8" height="3.2" viewBox="0 0 28 32"><path d="M14 3c-6 0-8 5-8 10v6l-3 5h22l-3-5v-6c0-5-2-10-8-10z" fill="none" stroke="#e8e8e2" stroke-width="3"/></svg></div><div class="a" style="left:0;top:387.7px;width:960px;height:12.3px;background:linear-gradient(90deg,#1b1f2c 0,#1c1f2a 12%,#191e3e 18%,#111b60 24%,#101a62 30%,#1a1e3c 35%,#1e2029 40%,#1e202c 47%,#181d44 52%,#141a50 58%,#151a4c 70%,#1c1d30 76%,#1f2029 82%,#1a1c36 88%,#181b3a 100%)"></div><div class="a" style="left:414.7px;top:390.7px;width:8px;height:8px"><div class="a" style="left:0.2px;top:0.2px;width:3.6px;height:3.6px;background:#35b6f2"></div><div class="a" style="left:0.2px;top:4.2px;width:3.6px;height:3.6px;background:#35b6f2"></div><div class="a" style="left:4.2px;top:0.2px;width:3.6px;height:3.6px;background:#35b6f2"></div><div class="a" style="left:4.2px;top:4.2px;width:3.6px;height:3.6px;background:#35b6f2"></div></div><svg style="left:427.6px;top:390.9px" width="7.6" height="7.6" viewBox="0 0 76 76"><circle cx="33" cy="33" r="23" fill="#2a3c5c" stroke="#f0f0f0" stroke-width="7"/><path d="M50 50l20 20" stroke="#f0f0f0" stroke-width="8"/></svg><div class="a" style="left:439.7px;top:390.7px;width:8px;height:8px"><div class="a" style="left:2.4px;top:.8px;width:5.4px;height:4.6px;background:#b9bcc4"></div><div class="a" style="left:.2px;top:2.6px;width:5.4px;height:4.6px;background:#eceef2;border:.3px solid #666"></div></div><div class="a" style="left:451.8px;top:390.7px;width:8px;height:8px"><div class="a" style="left:3px;top:.8px;width:4.8px;height:5.6px;border-radius:1.2px;background:#7b83eb"></div><div class="a" style="left:0;top:2px;width:5px;height:5px;border-radius:.8px;background:#4b53bc"></div><div class="t" style="left:1.2px;top:2.6px;font-size:3.8px;font-weight:bold;color:#fff">T</div></div><div class="a" style="left:464px;top:390.7px;width:8px;height:8px"><div class="a" style="left:.2px;top:1px;width:7.6px;height:6px;border-radius:.8px;background:#f6c945"></div><div class="a" style="left:.2px;top:.4px;width:3.4px;height:1.6px;border-radius:.5px;background:#e0a52a"></div><div class="a" style="left:.2px;top:5px;width:7.6px;height:2px;background:#3d8fe0"></div></div><div class="a" style="left:476.5px;top:390.7px;width:8px;height:8px"><div class="a" style="left:.2px;top:.2px;width:7.6px;height:7.6px;border-radius:50%;background:conic-gradient(from 200deg,#1b9de2,#35c1f1 30%,#4fd67b 50%,#1f6fd0 75%,#1b9de2)"></div><div class="a" style="left:2.4px;top:2.8px;width:4px;height:3px;border-radius:50%;background:#1a2a5a"></div></div><div class="a" style="left:488.8px;top:390.7px;width:8px;height:8px"><div class="a" style="left:.2px;top:.2px;width:7.6px;height:7.6px;border-radius:50%;background:conic-gradient(from -60deg,#ea4335 0 120deg,#fbbc05 120deg 240deg,#34a853 240deg 360deg)"></div><div class="a" style="left:2.3px;top:2.3px;width:3.4px;height:3.4px;border-radius:50%;background:#4285f4;border:.5px solid #fff"></div></div><div class="a" style="left:501px;top:390.7px;width:8px;height:8px"><div class="a" style="left:.3px;top:.3px;width:7.4px;height:7.4px;border-radius:1.2px;background:#f59a4c"></div><div class="a" style="left:1.8px;top:2px;width:4.4px;height:4px;border:.6px solid #fff3e4"></div></div><svg style="left:513.2px;top:390.7px" width="8" height="8" viewBox="0 0 52 52"><path d="M37 3L14 24 5 17l-3 2 8 7-8 7 3 2 9-7 23 21 12-6V9z M37 16v20L22 26z" fill="#2aa5f0" fill-rule="evenodd"/></svg><div class="a" style="left:525.2px;top:390.7px;width:8px;height:8px"><div class="a" style="left:.6px;top:.3px;width:6.8px;height:5.6px;border-radius:.7px;background:#e8e8ee"></div><div class="a" style="left:1.4px;top:1px;width:3px;height:3px;background:#d0483a"></div><div class="a" style="left:3.6px;top:3.4px;width:3.4px;height:4px;background:#5b8fd8"></div></div><svg style="left:537.3px;top:390.7px" width="8" height="8" viewBox="0 0 80 80"><path d="M10 44l20 20L72 18" fill="none" stroke="#3fa0f0" stroke-width="14"/><path d="M10 44l20 20" stroke="#e8f2ff" stroke-width="14"/></svg><div class="a" style="left:479.5px;top:399.2px;width:2px;height:.6px;border-radius:.3px;background:#9aa0b0"></div><div class="a" style="left:516.2px;top:399.2px;width:2px;height:.6px;border-radius:.3px;background:#9aa0b0"></div><div class="a" style="left:528.2px;top:399.2px;width:2px;height:.6px;border-radius:.3px;background:#9aa0b0"></div><div class="a" style="left:540.3px;top:399.2px;width:2px;height:.6px;border-radius:.3px;background:#9aa0b0"></div><svg style="left:886.6px;top:393.5px" width="3.8" height="2.2" viewBox="0 0 38 22"><path d="M3 19L19 4l16 15" fill="none" stroke="#e4e4e8" stroke-width="4"/></svg><div class="t" style="left:895.2px;top:393.09999999999997px;font-size:3.1px;color:#f0f0f2">ENG</div><svg style="left:907.6px;top:392.7px" width="4.6" height="3.8" viewBox="0 0 46 38"><path d="M3 12q20-18 40 0M10 20q13-11 26 0" fill="none" stroke="#eee" stroke-width="4"/><circle cx="23" cy="30" r="4" fill="#eee"/></svg><svg style="left:914.2px;top:392.7px" width="4.6" height="4" viewBox="0 0 46 40"><path d="M4 14h8l10-9v30l-10-9H4z" fill="none" stroke="#eee" stroke-width="4"/><path d="M30 11q8 9 0 18" fill="none" stroke="#eee" stroke-width="4"/></svg><div class="t" style="left:924px;width:14px;text-align:right;top:390.2px;font-size:3.05px;color:#f4f4f6">19:28</div><div class="t" style="left:922px;width:16px;text-align:right;top:395.3px;font-size:3.05px;color:#f4f4f6">1/4/2567</div><svg style="left:939.6px;top:392.09999999999997px" width="4" height="5" viewBox="0 0 40 50"><path d="M20 4c-9 0-13 7-13 15v10l-4 7h34l-4-7V19c0-8-4-15-13-15z" fill="#57b8f5"/><circle cx="20" cy="43" r="4.500" fill="#57b8f5"/></svg><div class="a" style="left:947.6px;top:390.7px;width:8px;height:8px;border-radius:2.6px;background:conic-gradient(from 0deg,#f0c030,#e8504a 25%,#a050e0 45%,#2a8af0 65%,#30c8a0 85%,#f0c030)"></div><div class="a" style="left:950px;top:393.09999999999997px;width:3.2px;height:3.2px;border-radius:1px;background:#1a1d38"></div></div></body></html>
